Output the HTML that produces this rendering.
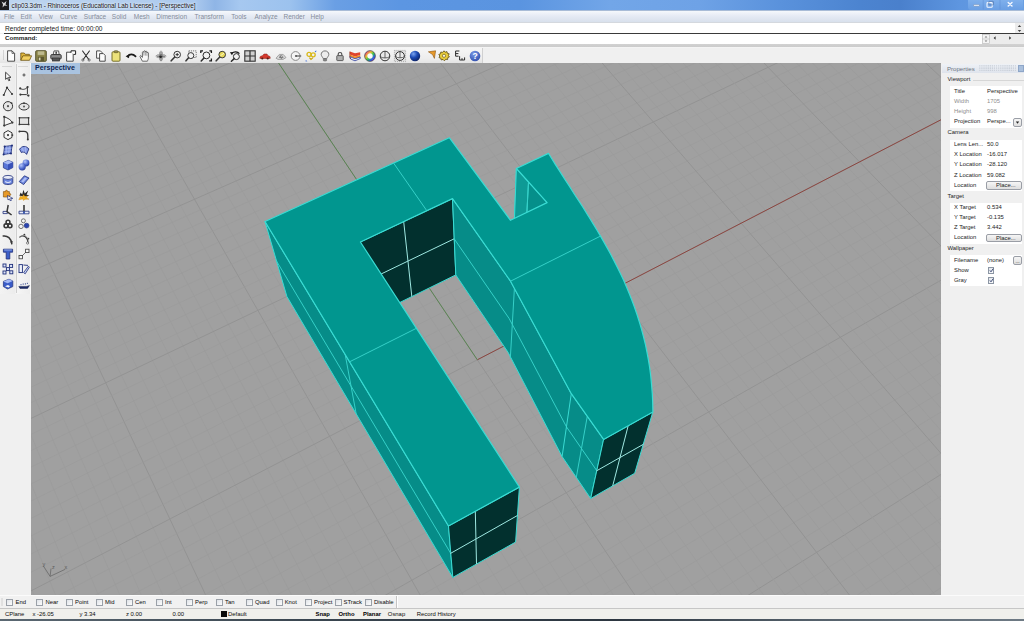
<!DOCTYPE html>
<html><head><meta charset="utf-8"><title>clip03.3dm - Rhinoceros</title>
<style>
html,body{margin:0;padding:0;}
body{width:1024px;height:621px;overflow:hidden;position:relative;background:#f0f0f0;font-family:"Liberation Sans",sans-serif;font-size:6px;color:#111;}
.abs{position:absolute;}
.t{position:absolute;white-space:nowrap;line-height:1;transform-origin:0 50%;}
#title{left:0;top:0;width:1024px;height:11px;background:linear-gradient(90deg,#bdd5ef 0px,#b6d0ee 100px,#abc9ee 195px,#8fb5e6 215px,#a6c8f0 240px,#9cc2ee 290px,#6a9fe4 335px,#5c96e2 400px,#5a94e0 520px,#72a6e8 610px,#6ea2e6 700px,#5a92dc 780px,#4c84d0 860px,#4a80cc 900px,#5e96e0 960px,#6a9fe2 1024px);}
#title:after{content:"";position:absolute;left:0;top:10px;width:1024px;height:1px;background:#a9bcd6;}
#title .txt{left:11.5px;top:2.6px;font-size:6.4px;color:#151515;letter-spacing:-0.05px;text-shadow:0 0 2px #fff,0 0 3px #e8f0fa;}
#ticon{left:0;top:0;width:9px;height:9.5px;background:#1c1c1c;}
#wbtn{left:968px;top:0;width:55px;height:9.5px;background:linear-gradient(180deg,#7fb0ec,#6a9fe4);border-radius:0 0 3px 3px;}
#menu{left:0;top:11px;width:1024px;height:11px;background:linear-gradient(180deg,#f5f8fc 0%,#e6ebf4 45%,#d8e0ec 100%);}
#menu .t{top:2.5px;font-size:6.5px;color:#848c9a;}
#hist{left:0;top:22px;width:1024px;height:11px;background:#fff;border-top:1px solid #d4d8de;box-sizing:border-box;}
#hist .t{left:5px;top:2.8px;font-size:6.6px;color:#1a1a1a;}
#hline{left:4px;top:33px;width:1020px;height:1px;background:#3a3a3a;}
#cmd{left:0;top:34px;width:1024px;height:10px;background:#fff;}
#cmd .t{left:5px;top:0.8px;font-size:6.2px;font-weight:bold;color:#1a1a1a;}
#gap{left:0;top:44px;width:1024px;height:4px;background:linear-gradient(180deg,#d2d2d2,#cbcbcb 75%,#f4f4f4 76%);}
#tb{left:0;top:48px;width:1024px;height:15px;background:linear-gradient(180deg,#f6f6f6,#ededed 70%,#e4e4e4);}
#tb svg{position:absolute;top:1.6px;width:12px;height:12px;overflow:visible;}
#side{left:0;top:63px;width:31px;height:532px;background:#f0f0f0;}
#side svg{position:absolute;width:12px;height:12px;overflow:visible;}
#view{left:31px;top:63px;width:910px;height:532px;overflow:hidden;background:#9f9f9f;}
#vlabel{left:31px;top:63px;width:49px;height:10.5px;background:#a9c3e0;}
#vlabel .t{left:4px;top:1.6px;font-size:7.1px;font-weight:bold;color:#0e2350;}
#props{left:941px;top:63px;width:83px;height:532px;background:#f0f0f0;}
#props .t{font-size:5.9px;color:#1c1c1c;}
#props .g{color:#8e8e8e;}
.row{position:absolute;left:9px;width:72px;height:10.2px;background:#fff;}
.btn{position:absolute;border:1px solid #9a9ea6;border-radius:2px;background:linear-gradient(180deg,#f6f6f6,#dedede);box-sizing:border-box;}
.cb{position:absolute;width:6.5px;height:6.5px;border:1px solid #8c96a4;background:linear-gradient(135deg,#dfe3e8,#fdfdfd);box-sizing:border-box;}
#osnap{left:0;top:595px;width:1024px;height:13px;background:#f1f1f1;border-top:1px solid #fbfbfb;box-sizing:border-box;}
#osnap .t{top:3.6px;font-size:5.9px;color:#0a0a0a;}
#osnap .cb{top:2.6px;width:7px;height:7px;border-color:#9aa0a8;}
#status{left:0;top:608px;width:1024px;height:11px;background:#f0f0ec;border-top:1px solid #c6c6c6;box-sizing:border-box;}
#status .t{top:2.6px;font-size:5.9px;color:#0a0a0a;}
#status b{font-weight:bold;color:#000;}
#bottom{left:0;top:619px;width:1024px;height:2px;background:linear-gradient(90deg,#5b6872,#3a4650 30%,#2c3640 60%,#56626c 80%,#6e7a84);}
</style></head><body>

<div id="title" class="abs"><div id="ticon" class="abs"><svg width="9" height="9.5" viewBox="0 0 9 9.5"><path d="M1.5 1.5 L4 3 L6.5 1 L5.5 4.5 L7.5 6 L4.5 5.5 L2.5 7.5 L3 4.5 Z" fill="#d8d8d8"/></svg></div>
<div class="t txt">clip03.3dm - Rhinoceros (Educational Lab License) - [Perspective]</div>
<div id="wbtn" class="abs"><svg width="55" height="9.5" viewBox="0 0 55 9.5"><rect x="5.5" y="4.6" width="6" height="1.6" rx=".5" fill="#f4f8ff" stroke="#4a6a9a" stroke-width=".4"/><rect x="19" y="2.6" width="5.2" height="4.6" rx=".8" fill="none" stroke="#f4f8ff" stroke-width="1.1"/><rect x="20.8" y="1.3" width="4.6" height="3.6" rx=".6" fill="none" stroke="#425e8c" stroke-width=".5"/><path d="M40.2 2.4 L44 6 M44 2.4 L40.2 6" stroke="#f4f8ff" stroke-width="1.4" stroke-linecap="round"/><path d="M15.2 0V9.5M32 0V9.5" stroke="#5a8ad0" stroke-width=".5"/></svg></div>
</div>
<div id="menu" class="abs">
<span class="t" style="left:4px">File</span><span class="t" style="left:20.5px">Edit</span><span class="t" style="left:38.8px">View</span><span class="t" style="left:60px">Curve</span><span class="t" style="left:83.8px">Surface</span><span class="t" style="left:111.8px">Solid</span><span class="t" style="left:133.8px">Mesh</span><span class="t" style="left:156.3px">Dimension</span><span class="t" style="left:194.5px">Transform</span><span class="t" style="left:231.3px">Tools</span><span class="t" style="left:254.5px">Analyze</span><span class="t" style="left:283.5px">Render</span><span class="t" style="left:310.5px">Help</span>
</div>
<div id="hist" class="abs"><span class="t">Render completed time: 00:00:00</span>
<div class="abs" style="left:1015px;top:0;width:9px;height:10px;background:#ececec;"><svg width="9" height="10" viewBox="0 0 9 10"><path d="M2.8 4 L4.5 2 L6.2 4Z M2.8 7 L4.5 9 L6.2 7Z" fill="#444"/></svg></div></div>
<div id="hline" class="abs"></div>
<div id="cmd" class="abs"><span class="t">Command:</span>
<div class="abs" style="left:982px;top:0;width:42px;height:10px;background:#ececec;"><svg width="42" height="10" viewBox="0 0 42 10"><rect x=".5" y=".5" width="7" height="9" fill="#f4f4f4" stroke="#b8b8b8" stroke-width=".6"/><path d="M.5 5H7.5" stroke="#b8b8b8" stroke-width=".6"/><path d="M2.6 3.6L4 2L5.4 3.6Z M2.6 6.4L4 8L5.4 6.4Z" fill="#777"/><path d="M13.6 2.2V5.8L11.6 4Z M27.2 2.2V5.8L29.2 4Z" fill="#333"/></svg></div></div>
<div id="gap" class="abs"></div>
<div id="tb" class="abs"><svg class="abs" style="left:2px;top:2px;width:3px;height:11px" viewBox="0 0 3 11"><path d="M1.5 .5V10.5" stroke="#b4b4b4" stroke-width="1" stroke-dasharray="1 1"/></svg>
<svg viewBox="0 0 12 12" style="left:5.0px"><path d="M2.6 .8H7L9.6 3.4V11.2H2.6Z" fill="#fdfdfd" stroke="#3a3a3a" stroke-width=".9"/><path d="M7 .8V3.4H9.6" fill="none" stroke="#3a3a3a" stroke-width=".7"/></svg>
<svg viewBox="0 0 12 12" style="left:20.0px"><path d="M.8 10.3V3H4.2L5.2 4.3H9.4V5.8" fill="#e3b93f" stroke="#6b5210" stroke-width=".8"/><path d="M.8 10.3L2.9 5.8H11.6L9.5 10.3Z" fill="#f3d162" stroke="#6b5210" stroke-width=".8"/></svg>
<svg viewBox="0 0 12 12" style="left:35.3px"><rect x=".7" y=".7" width="10.6" height="10.6" rx=".9" fill="#8b8549" stroke="#4c4822" stroke-width=".9"/><rect x="2.7" y="1.3" width="6.6" height="3.6" fill="#bdb98e"/><rect x="2.9" y="6.8" width="6.2" height="4.4" fill="#5c5830"/><rect x="3.8" y="7.6" width="1.7" height="2.8" fill="#d9d5b4"/></svg>
<svg viewBox="0 0 12 12" style="left:49.7px"><path d="M3.2 4.6L4 .9H8.6L9.2 4.6Z" fill="#f4f4f4" stroke="#333" stroke-width=".8"/><rect x=".8" y="4.6" width="10.4" height="4.4" rx="1" fill="#8c8c8c" stroke="#2e2e2e" stroke-width=".9"/><rect x="2.4" y="8" width="7.2" height="3" fill="#555" stroke="#2e2e2e" stroke-width=".7"/><rect x="5.4" y="1.6" width="1.6" height="2.2" fill="#444"/></svg>
<svg viewBox="0 0 12 12" style="left:65.3px"><path d="M1.6 2.2H6.4L8.2 4V11.2H1.6Z" fill="#fdfdfd" stroke="#3a3a3a" stroke-width=".9"/><path d="M6 2.6V.8H10.6V4.4H8.4" fill="#fdfdfd" stroke="#222" stroke-width="1"/></svg>
<svg viewBox="0 0 12 12" style="left:80.0px"><path d="M2.6 1L8.6 9.2M9.4 1L3.4 9.2" stroke="#2a2a2a" stroke-width="1.1" stroke-linecap="round"/><circle cx="2.9" cy="10" r="1.1" fill="none" stroke="#555" stroke-width=".8"/><circle cx="9.1" cy="10" r="1.1" fill="none" stroke="#555" stroke-width=".8"/></svg>
<svg viewBox="0 0 12 12" style="left:95.0px"><path d="M1.6 .9H5.4L7 2.5V8.2H1.6Z" fill="#fdfdfd" stroke="#3a3a3a" stroke-width=".9"/><path d="M4.6 3.6H8.4L10.2 5.4V11.2H4.6Z" fill="#fdfdfd" stroke="#3a3a3a" stroke-width=".9"/></svg>
<svg viewBox="0 0 12 12" style="left:109.7px"><rect x="2" y="1.8" width="8" height="9.4" rx="1" fill="#ece27a" stroke="#6a6220" stroke-width=".9"/><rect x="4.2" y=".7" width="3.6" height="2" rx=".6" fill="#9a9250" stroke="#5a5420" stroke-width=".6"/></svg>
<svg viewBox="0 0 12 12" style="left:124.7px"><path d="M2.6 6.4C4.6 3.6 8 3.6 10.6 6.4" fill="none" stroke="#1a1a1a" stroke-width="1.7" stroke-linecap="round"/><path d="M.6 6.2L4.4 4.2L4 8.2Z" fill="#1a1a1a"/></svg>
<svg viewBox="0 0 12 12" style="left:139.0px"><path d="M3.4 11.2L1 6.6C.6 5.6 1.8 5.2 2.4 6L3.4 7.4V2.4C3.4 1.4 4.9 1.4 4.9 2.4V1.5C4.9.5 6.4.5 6.4 1.5V2C6.4 1 7.9 1 7.9 2V3C7.9 2.1 9.4 2.1 9.4 3.1V7.4C9.4 9.2 8.8 10 8.4 11.2Z" fill="#f8f8f8" stroke="#4a4a4a" stroke-width=".8"/><path d="M4.9 2.4V5.6M6.4 2V5.6M7.9 3V5.8" stroke="#6a6a6a" stroke-width=".6"/></svg>
<svg viewBox="0 0 12 12" style="left:155.0px"><ellipse cx="6" cy="6" rx="1.7" ry="5.2" fill="none" stroke="#8e8e8e" stroke-width=".8"/><ellipse cx="6" cy="6.2" rx="5.2" ry="1.7" fill="none" stroke="#8e8e8e" stroke-width=".8"/><path d="M6 2V10.6M2 6.2H10" stroke="#3a3a3a" stroke-width=".8"/><circle cx="5.6" cy="6.8" r="1.3" fill="#222"/></svg>
<svg viewBox="0 0 12 12" style="left:169.7px"><circle cx="7.2" cy="4.6" r="3.3" fill="#f2f2f2" stroke="#383838" stroke-width="1"/><path d="M4.8 7L1.2 10.8" stroke="#383838" stroke-width="1.6" stroke-linecap="round"/><path d="M5.6 4.6H8.8M7.2 3V6.2" stroke="#2a2a2a" stroke-width=".9"/></svg>
<svg viewBox="0 0 12 12" style="left:184.7px"><rect x="3.8" y=".9" width="7.4" height="6.6" fill="none" stroke="#555" stroke-width=".8" stroke-dasharray="1.2 .9"/><circle cx="5.8" cy="5.6" r="3" fill="#f2f2f2" stroke="#383838" stroke-width="1"/><path d="M3.6 7.8L1 10.8" stroke="#383838" stroke-width="1.6" stroke-linecap="round"/></svg>
<svg viewBox="0 0 12 12" style="left:199.7px"><circle cx="6.4" cy="5.4" r="3.4" fill="#f2f2f2" stroke="#2b2b2b" stroke-width="1"/><path d="M4 8L1.2 11" stroke="#2b2b2b" stroke-width="1.5" stroke-linecap="round"/><path d="M.8 3V.8H3M9.4 .8H11.4V3M11.4 8.6V10.8H9.2" fill="none" stroke="#1a1a1a" stroke-width="1.3"/></svg>
<svg viewBox="0 0 12 12" style="left:215.0px"><circle cx="7.2" cy="4.6" r="3.3" fill="#e6d85a" stroke="#383838" stroke-width="1"/><path d="M4.8 7L1.2 10.8" stroke="#383838" stroke-width="1.6" stroke-linecap="round"/><path d="M5.4 5.8L9 3.2" stroke="#fff8c0" stroke-width="1"/></svg>
<svg viewBox="0 0 12 12" style="left:229.0px"><circle cx="7.4" cy="6.6" r="3" fill="#f2f2f2" stroke="#2b2b2b" stroke-width="1"/><path d="M5.2 8.6L2.4 11.2" stroke="#2b2b2b" stroke-width="1.5" stroke-linecap="round"/><path d="M2.8 3.4C5 1.2 8.6 1.4 10.4 3.6" fill="none" stroke="#1a1a1a" stroke-width="1.3"/><path d="M.8 2.2L4.4 2L3 5.2Z" fill="#1a1a1a"/></svg>
<svg viewBox="0 0 12 12" style="left:244.0px"><rect x=".8" y=".8" width="10.4" height="10.4" fill="#cfcfcf" stroke="#333" stroke-width="1.1"/><path d="M6 .8V11.2M.8 6H11.2" stroke="#333" stroke-width="1.2"/></svg>
<svg viewBox="0 0 12 12" style="left:259.0px"><path d="M.9 7.6C.9 6.2 2.2 6 3.4 5.8L5 4H8L9 5.8C10.4 6 11.2 6.4 11.2 7.6V8.4H.9Z" fill="#d43a2e" stroke="#8a1c14" stroke-width=".5"/><circle cx="3.3" cy="8.5" r="1.1" fill="#5a1a14"/><circle cx="8.7" cy="8.5" r="1.1" fill="#5a1a14"/></svg>
<svg viewBox="0 0 12 12" style="left:274.7px"><path d="M1 8.2L4.4 4.4H8.2L11 7.6L8 9.4H3Z" fill="#d8d8d8" stroke="#8a8a8a" stroke-width=".7"/><path d="M4 7.4H8.4M5 5.6L6.8 8.8" stroke="#6e6e6e" stroke-width=".8"/><circle cx="6.2" cy="6.8" r="1.3" fill="none" stroke="#777" stroke-width=".7"/></svg>
<svg viewBox="0 0 12 12" style="left:289.5px"><circle cx="5.6" cy="6" r="4.4" fill="#f4f4f4" stroke="#8a8a8a" stroke-width="1"/><path d="M6 6H11.2" stroke="#5a5a5a" stroke-width="1.2"/><circle cx="6" cy="6" r="1.1" fill="#5a5a5a"/></svg>
<svg viewBox="0 0 12 12" style="left:304.7px"><circle cx="4" cy="4.4" r="2" fill="none" stroke="#d8b818" stroke-width="1.3"/><circle cx="8.2" cy="4.8" r="2" fill="none" stroke="#d8b818" stroke-width="1.3"/><path d="M4.4 7.6L6 9.4L8 7.6" fill="none" stroke="#c8a410" stroke-width="1.1"/><path d="M9.6 1.2L11.4 .6L11 2.4ZM.8 10L.6 11.6L2.4 11.2Z" fill="#3a6ad8"/></svg>
<svg viewBox="0 0 12 12" style="left:319.0px"><path d="M6 .9C3.6.9 2.2 2.6 2.2 4.4C2.2 6 3.6 7 4.2 8.6H7.8C8.4 7 9.8 6 9.8 4.4C9.8 2.6 8.4.9 6 .9Z" fill="#ececec" stroke="#666" stroke-width=".9"/><rect x="4.4" y="8.8" width="3.2" height="2.2" rx=".6" fill="#8a8a8a" stroke="#555" stroke-width=".5"/></svg>
<svg viewBox="0 0 12 12" style="left:333.8px"><path d="M4.2 5.8V4C4.2 2 7.8 2 7.8 4V5.8" fill="none" stroke="#4a4a4a" stroke-width="1.1"/><rect x="2.8" y="5.6" width="6.4" height="5" rx=".6" fill="#b0b0b0" stroke="#505050" stroke-width=".9"/></svg>
<svg viewBox="0 0 12 12" style="left:349.0px"><path d="M.8 1.6L6 3.2L11.2 2.2V5L6 6.6L.8 4.6Z" fill="#e0442c"/><path d="M.8 4.6L6 6.6L11.2 5V7L6 8.8L.8 6.6Z" fill="#f08a28"/><path d="M.8 6.6L6 8.8L11.2 7V8.6L6 10.8L1.6 9Z" fill="#f4f4f4" stroke="#2a3a9a" stroke-width=".8"/><path d="M.8 1.6V6.8L1.6 9" fill="none" stroke="#7a2a1a" stroke-width=".6"/></svg>
<svg viewBox="0 0 12 12" style="left:363.8px"><defs><linearGradient id="cw1" x1="0" y1="0" x2="1" y2="1"><stop offset="0" stop-color="#e83a8a"/><stop offset=".3" stop-color="#f0c030"/><stop offset=".55" stop-color="#3ac84a"/><stop offset=".8" stop-color="#2a6ae0"/><stop offset="1" stop-color="#8a2ad0"/></linearGradient></defs><circle cx="6" cy="6" r="4" fill="none" stroke="url(#cw1)" stroke-width="2.6"/><circle cx="6" cy="6" r="5.4" fill="none" stroke="#222" stroke-width=".6"/><circle cx="6" cy="6" r="2.3" fill="#fafafa"/></svg>
<svg viewBox="0 0 12 12" style="left:378.8px"><circle cx="6" cy="6" r="4.8" fill="#e8e8e8" stroke="#333" stroke-width="1"/><path d="M1.2 6.6C3 8.4 9 8.4 10.8 6.6M6 1.2V8" fill="none" stroke="#444" stroke-width=".8"/></svg>
<svg viewBox="0 0 12 12" style="left:393.8px"><rect x=".4" y=".4" width="11.2" height="11.2" fill="#dcdcdc" stroke="#8a8a8a" stroke-width=".6" stroke-dasharray="1 1"/><circle cx="6" cy="6" r="4.4" fill="#ececec" stroke="#333" stroke-width="1"/><path d="M1.6 6.6C3.2 8.2 8.8 8.2 10.4 6.6M6 1.6V7.8" fill="none" stroke="#444" stroke-width=".8"/></svg>
<svg viewBox="0 0 12 12" style="left:408.5px"><defs><radialGradient id="bb1" cx=".35" cy=".3" r=".8"><stop offset="0" stop-color="#7aa4f0"/><stop offset=".45" stop-color="#1c4ab4"/><stop offset="1" stop-color="#0a1c5a"/></radialGradient></defs><circle cx="6" cy="6" r="5.2" fill="url(#bb1)"/></svg>
<svg viewBox="0 0 12 12" style="left:426.3px"><path d="M2.4 1.8L9.6 .8L8.4 8.4L6.6 4.6Z" fill="#e89a2a" stroke="#8a5210" stroke-width=".6"/></svg>
<svg viewBox="0 0 12 12" style="left:438.0px"><path d="M6 .8L7.2 2.2L9 1.6L9.4 3.4L11.2 3.8L10.4 5.4L11.4 7L9.8 7.6L9.6 9.6L7.8 9.2L6.4 10.8L5 9.4L3.2 10L2.8 8.2L1 7.6L1.8 6L.8 4.4L2.6 3.8L2.8 2L4.6 2.4Z" fill="#e8cc3a" stroke="#5a4a10" stroke-width=".8"/><circle cx="6" cy="5.8" r="1.6" fill="#f8f4d8" stroke="#5a4a10" stroke-width=".6"/></svg>
<svg viewBox="0 0 12 12" style="left:453.5px"><path d="M1.6 1H5.4M1.6 1V6.2H4.6M1.6 3.6H4.4M5.6 6.2V10H10.6V7.4M8 10V8.2" fill="none" stroke="#2a2a2a" stroke-width="1"/></svg>
<svg viewBox="0 0 12 12" style="left:468.5px"><defs><radialGradient id="hp1" cx=".4" cy=".3" r=".8"><stop offset="0" stop-color="#7a9ae8"/><stop offset="1" stop-color="#2a48a8"/></radialGradient></defs><circle cx="6" cy="6" r="5.3" fill="url(#hp1)"/><text x="6" y="9.2" text-anchor="middle" font-family="Liberation Sans,sans-serif" font-weight="bold" font-size="8.6" fill="#fff">?</text></svg>
<div class="abs" style="left:482px;top:0;width:1px;height:15px;background:#d0d0d0"></div><div class="abs" style="left:483px;top:0;width:541px;height:15px;background:#f0f0f0"></div></div>
<div id="side" class="abs"><div class="abs" style="left:0;top:0;width:31px;height:231px;background:linear-gradient(90deg,#f3f3f3,#ececec 48%,#f6f6f6 52%,#ececec)"></div>
<div class="abs" style="left:15.5px;top:1px;width:1px;height:229px;background:#cfcfcf"></div>
<div class="abs" style="left:29.5px;top:0;width:1.5px;height:231px;background:#fafafa"></div>
<svg class="abs" style="left:2px;top:2px;width:11px;height:3px" viewBox="0 0 11 3"><path d="M.5 1.5H10.5" stroke="#bcbcbc" stroke-width="1" stroke-dasharray="1 1"/></svg>
<svg class="abs" style="left:18px;top:2px;width:11px;height:3px" viewBox="0 0 11 3"><path d="M.5 1.5H10.5" stroke="#bcbcbc" stroke-width="1" stroke-dasharray="1 1"/></svg>
<svg viewBox="0 0 12 12" style="left:2px;top:6.9px"><path d="M3.6 2.2V9.4L5.4 7.8L6.8 10.8L7.9 10.3L6.5 7.4H9Z" fill="#fafafa" stroke="#383838" stroke-width=".9"/></svg>
<svg viewBox="0 0 12 12" style="left:18px;top:6.9px"><circle cx="6" cy="5" r="1.2" fill="#8a8a8a" stroke="#555" stroke-width=".5"/></svg>
<svg viewBox="0 0 12 12" style="left:2px;top:21.8px"><path d="M1.8 10L5 2.6L10 9" fill="none" stroke="#383838" stroke-width="1"/><circle cx="1.8" cy="10" r="1.1" fill="#383838"/><circle cx="5" cy="2.6" r="1.1" fill="#383838"/><circle cx="10" cy="9" r="1.1" fill="#383838"/></svg>
<svg viewBox="0 0 12 12" style="left:18px;top:21.8px"><path d="M2.2 3.4C5 5.4 8 4 9.6 2M2.4 9.6H8.4L10.4 10.6M9.4 2.4V9" fill="none" stroke="#383838" stroke-width="1"/><circle cx="2.2" cy="3.4" r="1.1" fill="#383838"/><circle cx="9.6" cy="2" r="1.1" fill="#383838"/><circle cx="2.4" cy="9.6" r="1.1" fill="#383838"/><circle cx="10.4" cy="10.6" r="1.1" fill="#383838"/></svg>
<svg viewBox="0 0 12 12" style="left:2px;top:36.6px"><circle cx="6" cy="6.2" r="4.6" fill="#e6e6e6" stroke="#383838" stroke-width="1"/><circle cx="6" cy="6.2" r="1.1" fill="#555"/><circle cx="9.6" cy="3.2" r="0.9" fill="#383838"/></svg>
<svg viewBox="0 0 12 12" style="left:18px;top:36.6px"><ellipse cx="6" cy="6.6" rx="5" ry="3.4" fill="#e6e6e6" stroke="#383838" stroke-width="1"/><circle cx="6" cy="6.6" r="1" fill="#555"/><circle cx="6" cy="3.2" r="0.9" fill="#383838"/></svg>
<svg viewBox="0 0 12 12" style="left:2px;top:51.5px"><path d="M2.2 1.8C6 3 9 5 10.4 7.6L2.2 10.6Z" fill="#f6f6f6" stroke="#383838" stroke-width="1"/><circle cx="2.2" cy="1.8" r="1.1" fill="#383838"/><circle cx="10.4" cy="7.6" r="1.1" fill="#383838"/><circle cx="2.2" cy="10.6" r="1.1" fill="#383838"/></svg>
<svg viewBox="0 0 12 12" style="left:18px;top:51.5px"><rect x="1.4" y="2.8" width="9.2" height="6.6" fill="#e2e2e2" stroke="#383838" stroke-width="1"/><circle cx="1.4" cy="2.8" r="0.9" fill="#383838"/><circle cx="10.6" cy="2.8" r="0.9" fill="#383838"/><circle cx="1.4" cy="9.4" r="0.9" fill="#383838"/><circle cx="10.6" cy="9.4" r="0.9" fill="#383838"/></svg>
<svg viewBox="0 0 12 12" style="left:2px;top:66.3px"><path d="M6 1.6L10 3.8V8.4L6 10.6L2 8.4V3.8Z" fill="#f6f6f6" stroke="#383838" stroke-width="1"/><circle cx="6" cy="6.1" r="1.1" fill="#383838"/><circle cx="10.4" cy="6.1" r="0.9" fill="#383838"/></svg>
<svg viewBox="0 0 12 12" style="left:18px;top:66.3px"><path d="M1.4 2.4H6C8.6 2.4 9.8 4 9.8 6.4V10.6" fill="none" stroke="#383838" stroke-width="1.3"/><circle cx="1.4" cy="2.4" r="1" fill="#383838"/><circle cx="9.8" cy="10.6" r="1" fill="#383838"/></svg>
<svg viewBox="0 0 12 12" style="left:2px;top:81.2px"><path d="M2.6 2.4L10 1.6L9 9.4L1.6 10.4Z" fill="#8296e4" stroke="#1f2f7a" stroke-width=".9"/><path d="M4.8 2.2L4 10M7.4 1.9L6.6 9.7M2.3 5L9.7 4.2M2 7.8L9.3 7" stroke="#b8c8f4" stroke-width=".5"/><circle cx="2.6" cy="2.4" r="1" fill="#1f2f7a"/><circle cx="10" cy="1.6" r="1" fill="#1f2f7a"/><circle cx="9" cy="9.4" r="1" fill="#1f2f7a"/><circle cx="1.6" cy="10.4" r="1" fill="#1f2f7a"/></svg>
<svg viewBox="0 0 12 12" style="left:18px;top:81.2px"><path d="M1.6 5.2C4 1.4 8.6 1.8 10.8 5L8.6 10.4C7.4 8 5 7.4 3.4 8.6Z" fill="#8a9ee8" stroke="#1f2f7a" stroke-width=".9"/><path d="M4 3.4L5.6 7.8M7.6 2.8L7.6 8.6" stroke="#c0ccf4" stroke-width=".5"/></svg>
<svg viewBox="0 0 12 12" style="left:2px;top:96.0px"><path d="M1.4 3.6L6.4 1.4L10.8 3.2V8.6L6 11L1.4 8.8Z" fill="#5a76d8" stroke="#1f2f7a" stroke-width=".7"/><path d="M1.4 3.6L6 5.4L10.8 3.2L6.4 1.4Z" fill="#aabcf4"/><path d="M6 5.4V11L10.8 8.6V3.2Z" fill="#3a52b8"/></svg>
<svg viewBox="0 0 12 12" style="left:18px;top:96.0px"><defs><radialGradient id="sg1" cx=".35" cy=".3" r=".8"><stop offset="0" stop-color="#b4c6fa"/><stop offset=".6" stop-color="#4a66cc"/><stop offset="1" stop-color="#22348a"/></radialGradient></defs><circle cx="8" cy="4" r="3.4" fill="url(#sg1)"/><circle cx="4.2" cy="7.8" r="3.6" fill="url(#sg1)"/></svg>
<svg viewBox="0 0 12 12" style="left:2px;top:110.9px"><path d="M1.2 3.4V8.6C1.2 11.2 10.8 11.2 10.8 8.6V3.4" fill="#6a84dc" stroke="#1f2f7a" stroke-width=".8"/><ellipse cx="6" cy="3.4" rx="4.8" ry="2" fill="#e8ecf8" stroke="#1f2f7a" stroke-width=".8"/><path d="M3.2 7.6C4.6 8.6 7.4 8.6 8.8 7.6" fill="none" stroke="#dfe6fa" stroke-width="1.2"/></svg>
<svg viewBox="0 0 12 12" style="left:18px;top:110.9px"><path d="M1.2 7.6L6.4 1.8L11 4L5.6 10.6Z" fill="#6a84dc" stroke="#1f2f7a" stroke-width=".8"/><path d="M3.2 7.4L7 3.2L9 4.2L5.2 8.6Z" fill="#aebef4"/></svg>
<svg viewBox="0 0 12 12" style="left:2px;top:125.7px"><path d="M1.4 2.6H3.6C3 .8 6 .8 5.4 2.6H7.4V4.6C9.2 4 9.2 7 7.4 6.4V8H1.4Z" fill="#e89a28" stroke="#7a4a0a" stroke-width=".6"/><path d="M5.4 6.4L10.8 9.4L8.6 9.6L9.4 11.4L8 11.6L7.4 9.8L6 11Z" fill="#fafafa" stroke="#1f2f7a" stroke-width=".7"/></svg>
<svg viewBox="0 0 12 12" style="left:18px;top:125.7px"><path d="M1.4 6.8L2.6 3.6L4.2 5.4L5.4 .8L6.8 4.6L10.2 1.4L8.6 5.8L11.2 6.2L8.8 7.6Z" fill="#2a2a2a"/><path d="M.8 10.8L2.4 7.2L4.2 8L5.6 5.6L7 7.8L9.4 6.8L8.6 9L11 10.2L7 10.2L5.8 11.4L4.4 10Z" fill="#f2b020" stroke="#c07808" stroke-width=".4"/></svg>
<svg viewBox="0 0 12 12" style="left:2px;top:140.6px"><path d="M1 7.4H5.4V9.6H1Z" fill="#e8ecf8" stroke="#1f2f7a" stroke-width=".8"/><path d="M6.2 1L5 7.6L9.6 11" fill="none" stroke="#383838" stroke-width="1.5"/></svg>
<svg viewBox="0 0 12 12" style="left:18px;top:140.6px"><path d="M1 7.2H11V9.8H1Z" fill="#e8ecf8" stroke="#1f2f7a" stroke-width=".8"/><path d="M6 1V9.6" stroke="#383838" stroke-width="1.6"/><path d="M5.2 7.2H6.8V9.8H5.2Z" fill="#3c5fc8"/></svg>
<svg viewBox="0 0 12 12" style="left:2px;top:155.4px"><circle cx="6" cy="4.2" r="1.9" fill="#fff" stroke="#383838" stroke-width="1.6"/><circle cx="4" cy="7.8" r="1.9" fill="#fff" stroke="#383838" stroke-width="1.6"/><circle cx="8" cy="7.8" r="1.9" fill="#fff" stroke="#383838" stroke-width="1.6"/></svg>
<svg viewBox="0 0 12 12" style="left:18px;top:155.4px"><circle cx="5.4" cy="2.8" r="2" fill="#f4f4f4" stroke="#555" stroke-width=".8"/><circle cx="3" cy="8.4" r="2.2" fill="#f4f4f4" stroke="#555" stroke-width=".8"/><circle cx="8.6" cy="7.6" r="2.4" fill="#2a44b0" stroke="#1f2f7a" stroke-width=".6"/></svg>
<svg viewBox="0 0 12 12" style="left:2px;top:170.2px"><path d="M1.2 3C5.6 2.4 9.2 5.4 9.8 10.8" fill="none" stroke="#383838" stroke-width="1.5" stroke-linecap="round"/><path d="M8 8.4L9.8 11.2L10.8 8" fill="#383838"/></svg>
<svg viewBox="0 0 12 12" style="left:18px;top:170.2px"><path d="M1.4 4.4C5 1 9.4 3.6 10 9.6" fill="none" stroke="#383838" stroke-width="1.1"/><path d="M1.4 4.4L6.4 1.4L10.6 5.6L10 9.6" fill="none" stroke="#9a9a9a" stroke-width=".5"/><circle cx="6.4" cy="1.6" r="0.9" fill="#383838"/><circle cx="10.4" cy="5.6" r="0.9" fill="#383838"/><circle cx="9.6" cy="10" r="1.1" fill="#fff" stroke="#333" stroke-width=".6"/></svg>
<svg viewBox="0 0 12 12" style="left:2px;top:185.1px"><path d="M1.4 1.2H10.6V4.2H7.8V11H4.2V4.2H1.4Z" fill="#3c5fc8" stroke="#1f2f7a" stroke-width=".8"/><path d="M2.2 2H9.8" stroke="#a8bcf4" stroke-width=".8"/></svg>
<svg viewBox="0 0 12 12" style="left:18px;top:185.1px"><path d="M3 9L9 3" stroke="#555" stroke-width=".8"/><rect x="1" y="7.4" width="3.4" height="3.4" fill="#f4f4f4" stroke="#383838" stroke-width=".8"/><rect x="7.6" y="1.2" width="3.4" height="3.4" fill="#f4f4f4" stroke="#383838" stroke-width=".8"/></svg>
<svg viewBox="0 0 12 12" style="left:2px;top:199.9px"><g fill="#dfe6fa" stroke="#1f2f7a" stroke-width=".9"><rect x="1" y="1" width="3" height="3"/><rect x="7.6" y="1.4" width="3" height="3"/><rect x="4.4" y="4.6" width="3" height="3"/><rect x="1" y="8" width="3" height="3"/><rect x="7.8" y="7.8" width="3" height="3"/></g></svg>
<svg viewBox="0 0 12 12" style="left:18px;top:199.9px"><rect x="1" y="1.6" width="3.4" height="8" fill="#eef2fc" stroke="#1f2f7a" stroke-width=".9"/><path d="M5.6 9.6L10.4 3.2L11.4 4.2L7.2 10.8Z" fill="#c8d4f8" stroke="#1f2f7a" stroke-width=".8"/><path d="M5.4 2L10 2.4" stroke="#1f2f7a" stroke-width=".9"/></svg>
<svg viewBox="0 0 12 12" style="left:2px;top:214.8px"><path d="M1.4 3.4L7 1.2L10.8 3V8.6L5.6 11L1.4 8.6Z" fill="#3a5cc8" stroke="#1f2f7a" stroke-width=".7"/><path d="M1.4 3.4L5.6 5.2L10.8 3L7 1.2Z" fill="#a4b8f4"/><path d="M3 8.2L6.6 9.6L8 8.2L6 7Z" fill="#f4f6fc"/></svg>
<svg viewBox="0 0 12 12" style="left:18px;top:214.8px"><path d="M.8 8.4L2 10.4H9.6L11.4 7.6L8.6 8.4Z" fill="#1c2c6a" stroke="#111a44" stroke-width=".5"/><path d="M3 7.2V6M5.2 6.8V5.4M7.4 6.6V5.2M9.4 6V4.8" stroke="#2a3c8a" stroke-width=".8"/></svg></div>
<div id="view" class="abs"><svg width="910" height="532" viewBox="0 0 910 532" style="display:block;background:#a0a0a0">
<g shape-rendering="auto"><line x1="22772.1" y1="-74844.8" x2="-1336.3" y2="-105.2" stroke="#939393" stroke-width="1" /><line x1="22772.1" y1="-74844.8" x2="3504.4" y2="986.4" stroke="#939393" stroke-width="1" /><line x1="25923.8" y1="-87248.9" x2="-1319.8" y2="-109.8" stroke="#9b9b9b" stroke-width="0.7" /><line x1="30434.2" y1="-98598.2" x2="3466.7" y2="963.7" stroke="#9b9b9b" stroke-width="0.7" /><line x1="30361.3" y1="-104713.4" x2="-1303.3" y2="-114.3" stroke="#9b9b9b" stroke-width="0.7" /><line x1="45455.5" y1="-145166.7" x2="3429.6" y2="941.3" stroke="#9b9b9b" stroke-width="0.7" /><line x1="37073.0" y1="-131128.5" x2="-1286.9" y2="-118.9" stroke="#9b9b9b" stroke-width="0.7" /><line x1="88236.3" y1="-277793.3" x2="3393.1" y2="919.4" stroke="#9b9b9b" stroke-width="0.7" /><line x1="48409.6" y1="-175745.6" x2="-1270.6" y2="-123.4" stroke="#9b9b9b" stroke-width="0.7" /><line x1="1171194.6" y1="-3635120.9" x2="3357.3" y2="897.8" stroke="#9b9b9b" stroke-width="0.7" /><line x1="71664.3" y1="-267268.5" x2="-1254.5" y2="-127.9" stroke="#9b9b9b" stroke-width="0.7" /><line x1="-105893.2" y1="324036.4" x2="3322.0" y2="876.6" stroke="#9b9b9b" stroke-width="0.7" /><line x1="146457.6" y1="-561630.0" x2="-1238.4" y2="-132.3" stroke="#9b9b9b" stroke-width="0.7" /><line x1="-51115.8" y1="154218.5" x2="3287.4" y2="855.8" stroke="#9b9b9b" stroke-width="0.7" /><line x1="-1311711.3" y1="5177242.5" x2="-1222.4" y2="-136.7" stroke="#9b9b9b" stroke-width="0.7" /><line x1="-33886.2" y1="100804.2" x2="3253.3" y2="835.2" stroke="#9b9b9b" stroke-width="0.7" /><line x1="-112818.6" y1="458795.5" x2="-1206.5" y2="-141.1" stroke="#9b9b9b" stroke-width="0.7" /><line x1="-25452.3" y1="74657.8" x2="3219.8" y2="815.1" stroke="#9b9b9b" stroke-width="0.7" /><line x1="-57045.7" y1="239292.0" x2="-1190.7" y2="-145.5" stroke="#9b9b9b" stroke-width="0.7" /><line x1="-20448.4" y1="59144.9" x2="3186.8" y2="795.2" stroke="#9b9b9b" stroke-width="0.7" /><line x1="-37283.5" y1="161514.3" x2="-1175.0" y2="-149.9" stroke="#939393" stroke-width="1" /><line x1="-17135.6" y1="48874.8" x2="3154.3" y2="775.7" stroke="#939393" stroke-width="1" /><line x1="-27167.1" y1="121699.3" x2="-1159.4" y2="-154.2" stroke="#9b9b9b" stroke-width="0.7" /><line x1="-14780.6" y1="41574.0" x2="3122.4" y2="756.5" stroke="#9b9b9b" stroke-width="0.7" /><line x1="-21019.7" y1="97505.5" x2="-1143.8" y2="-158.5" stroke="#9b9b9b" stroke-width="0.7" /><line x1="-13020.4" y1="36117.3" x2="3091.0" y2="737.5" stroke="#9b9b9b" stroke-width="0.7" /><line x1="-16888.7" y1="81247.2" x2="-1128.4" y2="-162.8" stroke="#9b9b9b" stroke-width="0.7" /><line x1="-11655.0" y1="31884.4" x2="3060.0" y2="718.9" stroke="#9b9b9b" stroke-width="0.7" /><line x1="-13921.8" y1="69570.3" x2="-1113.1" y2="-167.0" stroke="#9b9b9b" stroke-width="0.7" /><line x1="-10565.0" y1="28505.1" x2="3029.6" y2="700.6" stroke="#9b9b9b" stroke-width="0.7" /><line x1="-11687.6" y1="60777.4" x2="-1097.8" y2="-171.3" stroke="#9b9b9b" stroke-width="0.7" /><line x1="-9674.6" y1="25744.8" x2="2999.6" y2="682.6" stroke="#9b9b9b" stroke-width="0.7" /><line x1="-9944.6" y1="53917.5" x2="-1082.6" y2="-175.5" stroke="#9b9b9b" stroke-width="0.7" /><line x1="-8933.7" y1="23447.8" x2="2970.1" y2="664.8" stroke="#9b9b9b" stroke-width="0.7" /><line x1="-8546.9" y1="48416.4" x2="-1067.6" y2="-179.6" stroke="#9b9b9b" stroke-width="0.7" /><line x1="-8307.5" y1="21506.4" x2="2941.0" y2="647.3" stroke="#9b9b9b" stroke-width="0.7" /><line x1="-7401.0" y1="43906.7" x2="-1052.6" y2="-183.8" stroke="#9b9b9b" stroke-width="0.7" /><line x1="-7771.2" y1="19844.0" x2="2912.4" y2="630.1" stroke="#9b9b9b" stroke-width="0.7" /><line x1="-6444.6" y1="40142.5" x2="-1037.7" y2="-187.9" stroke="#9b9b9b" stroke-width="0.7" /><line x1="-7306.9" y1="18404.4" x2="2884.2" y2="613.1" stroke="#9b9b9b" stroke-width="0.7" /><line x1="-5634.2" y1="36953.1" x2="-1022.8" y2="-192.0" stroke="#939393" stroke-width="1" /><line x1="-6900.9" y1="17145.7" x2="2856.4" y2="596.4" stroke="#939393" stroke-width="1" /><line x1="-4938.8" y1="34216.2" x2="-1008.1" y2="-196.1" stroke="#9b9b9b" stroke-width="0.7" /><line x1="-6542.9" y1="16035.9" x2="2829.0" y2="579.9" stroke="#9b9b9b" stroke-width="0.7" /><line x1="-4335.5" y1="31841.8" x2="-993.4" y2="-200.2" stroke="#9b9b9b" stroke-width="0.7" /><line x1="-6224.8" y1="15049.9" x2="2802.0" y2="563.7" stroke="#9b9b9b" stroke-width="0.7" /><line x1="-3807.2" y1="29762.5" x2="-978.9" y2="-204.2" stroke="#9b9b9b" stroke-width="0.7" /><line x1="-5940.4" y1="14168.2" x2="2775.5" y2="547.7" stroke="#9b9b9b" stroke-width="0.7" /><line x1="-3340.6" y1="27926.4" x2="-964.4" y2="-208.2" stroke="#9b9b9b" stroke-width="0.7" /><line x1="-5684.5" y1="13374.9" x2="2749.3" y2="531.9" stroke="#9b9b9b" stroke-width="0.7" /><line x1="-2925.7" y1="26293.2" x2="-950.0" y2="-212.2" stroke="#9b9b9b" stroke-width="0.7" /><line x1="-5453.1" y1="12657.6" x2="2723.4" y2="516.4" stroke="#9b9b9b" stroke-width="0.7" /><line x1="-2554.1" y1="24831.0" x2="-935.6" y2="-216.2" stroke="#9b9b9b" stroke-width="0.7" /><line x1="-5242.9" y1="12005.7" x2="2698.0" y2="501.1" stroke="#9b9b9b" stroke-width="0.7" /><line x1="-2219.6" y1="23514.3" x2="-921.4" y2="-220.1" stroke="#9b9b9b" stroke-width="0.7" /><line x1="-5050.9" y1="11410.7" x2="2672.9" y2="486.0" stroke="#9b9b9b" stroke-width="0.7" /><line x1="-1916.8" y1="22322.5" x2="-907.2" y2="-224.1" stroke="#9b9b9b" stroke-width="0.7" /><line x1="-4875.1" y1="10865.4" x2="2648.2" y2="471.1" stroke="#9b9b9b" stroke-width="0.7" /><line x1="-1641.3" y1="21238.5" x2="-893.1" y2="-228.0" stroke="#9b9b9b" stroke-width="0.7" /><line x1="-4713.3" y1="10363.9" x2="2623.8" y2="456.4" stroke="#9b9b9b" stroke-width="0.7" /><line x1="-1389.8" y1="20248.4" x2="-879.1" y2="-231.9" stroke="#939393" stroke-width="1" /><line x1="-4564.0" y1="9901.1" x2="2599.7" y2="441.9" stroke="#939393" stroke-width="1" /><line x1="-1159.1" y1="19340.5" x2="-865.2" y2="-235.7" stroke="#9b9b9b" stroke-width="0.7" /><line x1="-4425.8" y1="9472.7" x2="2576.0" y2="427.7" stroke="#9b9b9b" stroke-width="0.7" /><line x1="-946.8" y1="18504.9" x2="-851.3" y2="-239.6" stroke="#9b9b9b" stroke-width="0.7" /><line x1="-4297.5" y1="9075.0" x2="2552.6" y2="413.6" stroke="#9b9b9b" stroke-width="0.7" /><line x1="-750.7" y1="17733.3" x2="-837.5" y2="-243.4" stroke="#9b9b9b" stroke-width="0.7" /><line x1="-4178.1" y1="8704.8" x2="2529.6" y2="399.7" stroke="#9b9b9b" stroke-width="0.7" /><line x1="-569.2" y1="17018.7" x2="-823.8" y2="-247.2" stroke="#9b9b9b" stroke-width="0.7" /><line x1="-4066.7" y1="8359.3" x2="2506.8" y2="386.0" stroke="#9b9b9b" stroke-width="0.7" /><line x1="-400.5" y1="16355.0" x2="-810.2" y2="-251.0" stroke="#9b9b9b" stroke-width="0.7" /><line x1="-3962.4" y1="8036.2" x2="2484.3" y2="372.5" stroke="#9b9b9b" stroke-width="0.7" /><line x1="-243.5" y1="15736.9" x2="-796.6" y2="-254.7" stroke="#9b9b9b" stroke-width="0.7" /><line x1="-3864.8" y1="7733.3" x2="2462.2" y2="359.1" stroke="#9b9b9b" stroke-width="0.7" /><line x1="-96.8" y1="15159.8" x2="-783.2" y2="-258.4" stroke="#9b9b9b" stroke-width="0.7" /><line x1="-3773.0" y1="7448.9" x2="2440.3" y2="346.0" stroke="#9b9b9b" stroke-width="0.7" /><line x1="40.4" y1="14619.9" x2="-769.7" y2="-262.2" stroke="#9b9b9b" stroke-width="0.7" /><line x1="-3686.6" y1="7181.2" x2="2418.7" y2="333.0" stroke="#9b9b9b" stroke-width="0.7" /><line x1="169.0" y1="14113.6" x2="-756.4" y2="-265.9" stroke="#9b9b9b" stroke-width="0.7" /><line x1="-3605.2" y1="6928.8" x2="2397.4" y2="320.2" stroke="#9b9b9b" stroke-width="0.7" /><line x1="289.9" y1="13637.9" x2="-743.1" y2="-269.5" stroke="#939393" stroke-width="1" /><line x1="-3528.4" y1="6690.5" x2="2376.4" y2="307.5" stroke="#939393" stroke-width="1" /><line x1="403.6" y1="13190.1" x2="-729.9" y2="-273.2" stroke="#9b9b9b" stroke-width="0.7" /><line x1="-3455.7" y1="6465.1" x2="2355.7" y2="295.0" stroke="#9b9b9b" stroke-width="0.7" /><line x1="510.9" y1="12767.9" x2="-716.8" y2="-276.8" stroke="#9b9b9b" stroke-width="0.7" /><line x1="-3386.8" y1="6251.6" x2="2335.2" y2="282.7" stroke="#9b9b9b" stroke-width="0.7" /><line x1="612.3" y1="12369.0" x2="-703.8" y2="-280.4" stroke="#9b9b9b" stroke-width="0.7" /><line x1="-3321.5" y1="6049.0" x2="2314.9" y2="270.5" stroke="#9b9b9b" stroke-width="0.7" /><line x1="708.2" y1="11991.6" x2="-690.8" y2="-284.0" stroke="#9b9b9b" stroke-width="0.7" /><line x1="-3259.4" y1="5856.7" x2="2295.0" y2="258.5" stroke="#9b9b9b" stroke-width="0.7" /><line x1="799.0" y1="11634.0" x2="-677.9" y2="-287.6" stroke="#9b9b9b" stroke-width="0.7" /><line x1="-3200.4" y1="5673.7" x2="2275.3" y2="246.6" stroke="#9b9b9b" stroke-width="0.7" /><line x1="885.2" y1="11294.8" x2="-665.0" y2="-291.2" stroke="#9b9b9b" stroke-width="0.7" /><line x1="-3144.2" y1="5499.4" x2="2255.8" y2="234.9" stroke="#9b9b9b" stroke-width="0.7" /><line x1="967.1" y1="10972.4" x2="-652.2" y2="-294.7" stroke="#9b9b9b" stroke-width="0.7" /><line x1="-3090.6" y1="5333.3" x2="2236.6" y2="223.4" stroke="#9b9b9b" stroke-width="0.7" /><line x1="1045.1" y1="10665.7" x2="-639.5" y2="-298.2" stroke="#9b9b9b" stroke-width="0.7" /><line x1="-3039.4" y1="5174.7" x2="2217.6" y2="211.9" stroke="#9b9b9b" stroke-width="0.7" /><line x1="1119.3" y1="10373.7" x2="-626.9" y2="-301.8" stroke="#9b9b9b" stroke-width="0.7" /><line x1="-2990.6" y1="5023.2" x2="2198.8" y2="200.6" stroke="#9b9b9b" stroke-width="0.7" /><line x1="1190.0" y1="10095.1" x2="-614.3" y2="-305.2" stroke="#939393" stroke-width="1" /><line x1="-2943.8" y1="4878.3" x2="2180.3" y2="189.5" stroke="#939393" stroke-width="1" /><line x1="1257.6" y1="9829.2" x2="-601.8" y2="-308.7" stroke="#9b9b9b" stroke-width="0.7" /><line x1="-2899.1" y1="4739.6" x2="2162.0" y2="178.5" stroke="#9b9b9b" stroke-width="0.7" /><line x1="1322.2" y1="9575.1" x2="-589.3" y2="-312.2" stroke="#9b9b9b" stroke-width="0.7" /><line x1="-2856.2" y1="4606.6" x2="2143.9" y2="167.6" stroke="#9b9b9b" stroke-width="0.7" /><line x1="1383.9" y1="9332.0" x2="-576.9" y2="-315.6" stroke="#9b9b9b" stroke-width="0.7" /><line x1="-2815.1" y1="4479.1" x2="2126.0" y2="156.8" stroke="#9b9b9b" stroke-width="0.7" /><line x1="1443.1" y1="9099.2" x2="-564.6" y2="-319.0" stroke="#9b9b9b" stroke-width="0.7" /><line x1="-2775.6" y1="4356.7" x2="2108.3" y2="146.2" stroke="#9b9b9b" stroke-width="0.7" /><line x1="1499.8" y1="8876.2" x2="-552.4" y2="-322.4" stroke="#9b9b9b" stroke-width="0.7" /><line x1="-2737.6" y1="4239.1" x2="2090.9" y2="135.7" stroke="#9b9b9b" stroke-width="0.7" /><line x1="1554.1" y1="8662.2" x2="-540.2" y2="-325.8" stroke="#9b9b9b" stroke-width="0.7" /><line x1="-2701.2" y1="4126.1" x2="2073.6" y2="125.3" stroke="#9b9b9b" stroke-width="0.7" /><line x1="1606.3" y1="8456.7" x2="-528.0" y2="-329.1" stroke="#9b9b9b" stroke-width="0.7" /><line x1="-2666.1" y1="4017.3" x2="2056.6" y2="115.1" stroke="#9b9b9b" stroke-width="0.7" /><line x1="1656.5" y1="8259.3" x2="-516.0" y2="-332.5" stroke="#9b9b9b" stroke-width="0.7" /><line x1="-2632.3" y1="3912.5" x2="2039.8" y2="104.9" stroke="#9b9b9b" stroke-width="0.7" /><line x1="1704.7" y1="8069.4" x2="-504.0" y2="-335.8" stroke="#9b9b9b" stroke-width="0.7" /><line x1="-2599.7" y1="3811.6" x2="2023.1" y2="94.9" stroke="#9b9b9b" stroke-width="0.7" /><line x1="1751.2" y1="7886.8" x2="-492.0" y2="-339.1" stroke="#939393" stroke-width="1" /><line x1="-2568.3" y1="3714.3" x2="2006.6" y2="85.0" stroke="#939393" stroke-width="1" /><line x1="1795.9" y1="7710.8" x2="-480.1" y2="-342.4" stroke="#9b9b9b" stroke-width="0.7" /><line x1="-2538.0" y1="3620.4" x2="1990.4" y2="75.2" stroke="#9b9b9b" stroke-width="0.7" /><line x1="1838.9" y1="7541.3" x2="-468.3" y2="-345.7" stroke="#9b9b9b" stroke-width="0.7" /><line x1="-2508.8" y1="3529.7" x2="1974.3" y2="65.5" stroke="#9b9b9b" stroke-width="0.7" /><line x1="1880.5" y1="7377.8" x2="-456.6" y2="-348.9" stroke="#9b9b9b" stroke-width="0.7" /><line x1="-2480.6" y1="3442.1" x2="1958.4" y2="55.9" stroke="#9b9b9b" stroke-width="0.7" /><line x1="1920.6" y1="7220.0" x2="-444.8" y2="-352.2" stroke="#9b9b9b" stroke-width="0.7" /><line x1="-2453.2" y1="3357.4" x2="1942.7" y2="46.5" stroke="#9b9b9b" stroke-width="0.7" /><line x1="1959.3" y1="7067.7" x2="-433.2" y2="-355.4" stroke="#9b9b9b" stroke-width="0.7" /><line x1="-2426.8" y1="3275.6" x2="1927.1" y2="37.1" stroke="#9b9b9b" stroke-width="0.7" /><line x1="1996.7" y1="6920.5" x2="-421.6" y2="-358.6" stroke="#9b9b9b" stroke-width="0.7" /><line x1="-2401.3" y1="3196.3" x2="1911.7" y2="27.9" stroke="#9b9b9b" stroke-width="0.7" /><line x1="2032.8" y1="6778.2" x2="-410.1" y2="-361.8" stroke="#9b9b9b" stroke-width="0.7" /><line x1="-2376.5" y1="3119.6" x2="1896.5" y2="18.7" stroke="#9b9b9b" stroke-width="0.7" /><line x1="2067.8" y1="6640.6" x2="-398.6" y2="-365.0" stroke="#9b9b9b" stroke-width="0.7" /><line x1="-2352.6" y1="3045.3" x2="1881.5" y2="9.7" stroke="#9b9b9b" stroke-width="0.7" /><line x1="2101.6" y1="6507.4" x2="-387.2" y2="-368.2" stroke="#9b9b9b" stroke-width="0.7" /><line x1="-2329.3" y1="2973.3" x2="1866.6" y2="0.7" stroke="#9b9b9b" stroke-width="0.7" /><line x1="2134.4" y1="6378.4" x2="-375.9" y2="-371.3" stroke="#939393" stroke-width="1" /><line x1="-2306.8" y1="2903.4" x2="1851.9" y2="-8.2" stroke="#939393" stroke-width="1" /><line x1="2166.2" y1="6253.4" x2="-364.6" y2="-374.4" stroke="#9b9b9b" stroke-width="0.7" /><line x1="-2284.9" y1="2835.7" x2="1837.3" y2="-16.9" stroke="#9b9b9b" stroke-width="0.7" /><line x1="2196.9" y1="6132.3" x2="-353.3" y2="-377.5" stroke="#9b9b9b" stroke-width="0.7" /><line x1="-2263.7" y1="2769.9" x2="1822.9" y2="-25.6" stroke="#9b9b9b" stroke-width="0.7" /><line x1="2226.8" y1="6014.9" x2="-342.1" y2="-380.6" stroke="#9b9b9b" stroke-width="0.7" /><line x1="-2243.1" y1="2706.0" x2="1808.7" y2="-34.2" stroke="#9b9b9b" stroke-width="0.7" /><line x1="2255.7" y1="5900.9" x2="-331.0" y2="-383.7" stroke="#9b9b9b" stroke-width="0.7" /><line x1="-2223.1" y1="2644.0" x2="1794.6" y2="-42.6" stroke="#9b9b9b" stroke-width="0.7" /><line x1="2283.8" y1="5790.3" x2="-319.9" y2="-386.8" stroke="#9b9b9b" stroke-width="0.7" /><line x1="-2203.7" y1="2583.7" x2="1780.6" y2="-51.0" stroke="#9b9b9b" stroke-width="0.7" /><line x1="2311.1" y1="5682.9" x2="-308.9" y2="-389.9" stroke="#9b9b9b" stroke-width="0.7" /><line x1="-2184.8" y1="2525.1" x2="1766.8" y2="-59.3" stroke="#9b9b9b" stroke-width="0.7" /><line x1="2337.6" y1="5578.6" x2="-297.9" y2="-392.9" stroke="#9b9b9b" stroke-width="0.7" /><line x1="-2166.4" y1="2468.1" x2="1753.2" y2="-67.6" stroke="#9b9b9b" stroke-width="0.7" /><line x1="2363.4" y1="5477.2" x2="-287.0" y2="-395.9" stroke="#9b9b9b" stroke-width="0.7" /><line x1="-2148.5" y1="2412.7" x2="1739.7" y2="-75.7" stroke="#9b9b9b" stroke-width="0.7" /><line x1="2388.4" y1="5378.6" x2="-276.1" y2="-398.9" stroke="#9b9b9b" stroke-width="0.7" /><line x1="-2131.1" y1="2358.7" x2="1726.3" y2="-83.7" stroke="#9b9b9b" stroke-width="0.7" /><line x1="2412.8" y1="5282.7" x2="-265.3" y2="-401.9" stroke="#939393" stroke-width="1" /><line x1="-2114.1" y1="2306.2" x2="1713.0" y2="-91.7" stroke="#939393" stroke-width="1" /><line x1="2436.5" y1="5189.4" x2="-254.6" y2="-404.9" stroke="#9b9b9b" stroke-width="0.7" /><line x1="-2097.6" y1="2255.0" x2="1699.9" y2="-99.6" stroke="#9b9b9b" stroke-width="0.7" /><line x1="2459.6" y1="5098.6" x2="-243.9" y2="-407.9" stroke="#9b9b9b" stroke-width="0.7" /><line x1="-2081.5" y1="2205.1" x2="1687.0" y2="-107.4" stroke="#9b9b9b" stroke-width="0.7" /><line x1="2482.1" y1="5010.2" x2="-233.2" y2="-410.8" stroke="#9b9b9b" stroke-width="0.7" /><line x1="-2065.9" y1="2156.5" x2="1674.1" y2="-115.1" stroke="#9b9b9b" stroke-width="0.7" /><line x1="2503.9" y1="4924.0" x2="-222.6" y2="-413.8" stroke="#9b9b9b" stroke-width="0.7" /><line x1="-2050.6" y1="2109.1" x2="1661.4" y2="-122.8" stroke="#9b9b9b" stroke-width="0.7" /><line x1="2525.3" y1="4840.1" x2="-212.1" y2="-416.7" stroke="#9b9b9b" stroke-width="0.7" /><line x1="-2035.7" y1="2062.9" x2="1648.9" y2="-130.3" stroke="#9b9b9b" stroke-width="0.7" /><line x1="2546.1" y1="4758.3" x2="-201.6" y2="-419.6" stroke="#9b9b9b" stroke-width="0.7" /><line x1="-2021.1" y1="2017.8" x2="1636.4" y2="-137.8" stroke="#9b9b9b" stroke-width="0.7" /><line x1="2566.3" y1="4678.5" x2="-191.1" y2="-422.5" stroke="#9b9b9b" stroke-width="0.7" /><line x1="-2006.9" y1="1973.8" x2="1624.1" y2="-145.2" stroke="#9b9b9b" stroke-width="0.7" /><line x1="2586.1" y1="4600.7" x2="-180.7" y2="-425.4" stroke="#9b9b9b" stroke-width="0.7" /><line x1="-1993.1" y1="1930.9" x2="1611.9" y2="-152.6" stroke="#9b9b9b" stroke-width="0.7" /><line x1="2605.4" y1="4524.8" x2="-170.4" y2="-428.2" stroke="#9b9b9b" stroke-width="0.7" /><line x1="-1979.5" y1="1888.9" x2="1599.8" y2="-159.9" stroke="#9b9b9b" stroke-width="0.7" /><line x1="2624.2" y1="4450.8" x2="-160.1" y2="-431.1" stroke="#939393" stroke-width="1" /><line x1="-1966.3" y1="1848.0" x2="1587.8" y2="-167.1" stroke="#939393" stroke-width="1" /><line x1="2642.6" y1="4378.4" x2="-149.8" y2="-433.9" stroke="#9b9b9b" stroke-width="0.7" /><line x1="-1953.4" y1="1807.9" x2="1576.0" y2="-174.2" stroke="#9b9b9b" stroke-width="0.7" /><line x1="2660.5" y1="4307.8" x2="-139.6" y2="-436.8" stroke="#9b9b9b" stroke-width="0.7" /><line x1="-1940.8" y1="1768.8" x2="1564.2" y2="-181.3" stroke="#9b9b9b" stroke-width="0.7" /><line x1="2678.0" y1="4238.8" x2="-129.4" y2="-439.6" stroke="#9b9b9b" stroke-width="0.7" /><line x1="-1928.5" y1="1730.6" x2="1552.6" y2="-188.3" stroke="#9b9b9b" stroke-width="0.7" /><line x1="2695.2" y1="4171.5" x2="-119.3" y2="-442.4" stroke="#9b9b9b" stroke-width="0.7" /><line x1="-1916.4" y1="1693.2" x2="1541.1" y2="-195.2" stroke="#9b9b9b" stroke-width="0.7" /><line x1="2711.9" y1="4105.6" x2="-109.3" y2="-445.2" stroke="#9b9b9b" stroke-width="0.7" /><line x1="-1904.6" y1="1656.6" x2="1529.7" y2="-202.0" stroke="#9b9b9b" stroke-width="0.7" /><line x1="2728.3" y1="4041.2" x2="-99.3" y2="-447.9" stroke="#9b9b9b" stroke-width="0.7" /><line x1="-1893.1" y1="1620.9" x2="1518.4" y2="-208.8" stroke="#9b9b9b" stroke-width="0.7" /><line x1="2744.3" y1="3978.3" x2="-89.3" y2="-450.7" stroke="#9b9b9b" stroke-width="0.7" /><line x1="-1881.8" y1="1585.9" x2="1507.2" y2="-215.6" stroke="#9b9b9b" stroke-width="0.7" /><line x1="2759.9" y1="3916.7" x2="-79.4" y2="-453.5" stroke="#9b9b9b" stroke-width="0.7" /><line x1="-1870.8" y1="1551.6" x2="1496.1" y2="-222.2" stroke="#9b9b9b" stroke-width="0.7" /><line x1="2775.2" y1="3856.5" x2="-69.5" y2="-456.2" stroke="#9b9b9b" stroke-width="0.7" /><line x1="-1859.9" y1="1518.1" x2="1485.1" y2="-228.9" stroke="#9b9b9b" stroke-width="0.7" /><line x1="2790.2" y1="3797.5" x2="-59.7" y2="-458.9" stroke="#939393" stroke-width="1" /><line x1="-1849.3" y1="1485.3" x2="1474.3" y2="-235.4" stroke="#939393" stroke-width="1" /><line x1="2804.8" y1="3739.8" x2="-49.9" y2="-461.6" stroke="#9b9b9b" stroke-width="0.7" /><line x1="-1839.0" y1="1453.1" x2="1463.5" y2="-241.9" stroke="#9b9b9b" stroke-width="0.7" /><line x1="2819.2" y1="3683.4" x2="-40.1" y2="-464.3" stroke="#9b9b9b" stroke-width="0.7" /><line x1="-1828.8" y1="1421.6" x2="1452.8" y2="-248.3" stroke="#9b9b9b" stroke-width="0.7" /><line x1="2833.2" y1="3628.1" x2="-30.5" y2="-467.0" stroke="#9b9b9b" stroke-width="0.7" /><line x1="-1818.9" y1="1390.8" x2="1442.2" y2="-254.7" stroke="#9b9b9b" stroke-width="0.7" /><line x1="2847.0" y1="3573.9" x2="-20.8" y2="-469.7" stroke="#9b9b9b" stroke-width="0.7" /><line x1="-1809.1" y1="1360.5" x2="1431.8" y2="-261.0" stroke="#9b9b9b" stroke-width="0.7" /><line x1="2860.5" y1="3520.8" x2="-11.2" y2="-472.3" stroke="#9b9b9b" stroke-width="0.7" /><line x1="-1799.5" y1="1330.9" x2="1421.4" y2="-267.2" stroke="#9b9b9b" stroke-width="0.7" /><line x1="2873.7" y1="3468.9" x2="-1.6" y2="-475.0" stroke="#9b9b9b" stroke-width="0.7" /><line x1="-1790.2" y1="1301.8" x2="1411.1" y2="-273.4" stroke="#9b9b9b" stroke-width="0.7" /><line x1="2886.6" y1="3417.9" x2="7.9" y2="-477.6" stroke="#9b9b9b" stroke-width="0.7" /><line x1="-1781.0" y1="1273.3" x2="1400.9" y2="-279.6" stroke="#9b9b9b" stroke-width="0.7" /><line x1="2899.3" y1="3368.0" x2="17.3" y2="-480.3" stroke="#9b9b9b" stroke-width="0.7" /><line x1="-1772.0" y1="1245.4" x2="1390.8" y2="-285.6" stroke="#9b9b9b" stroke-width="0.7" /><line x1="2911.8" y1="3319.0" x2="26.8" y2="-482.9" stroke="#9b9b9b" stroke-width="0.7" /><line x1="-1763.1" y1="1218.0" x2="1380.8" y2="-291.7" stroke="#9b9b9b" stroke-width="0.7" /><line x1="2924.0" y1="3271.0" x2="36.2" y2="-485.5" stroke="#939393" stroke-width="1" /><line x1="-1754.5" y1="1191.1" x2="1370.9" y2="-297.6" stroke="#939393" stroke-width="1" /><line x1="2935.9" y1="3223.9" x2="45.5" y2="-488.1" stroke="#9b9b9b" stroke-width="0.7" /><line x1="-1745.9" y1="1164.7" x2="1361.0" y2="-303.6" stroke="#9b9b9b" stroke-width="0.7" /><line x1="2947.7" y1="3177.7" x2="54.8" y2="-490.6" stroke="#9b9b9b" stroke-width="0.7" /><line x1="-1737.6" y1="1138.8" x2="1351.3" y2="-309.4" stroke="#9b9b9b" stroke-width="0.7" /><line x1="2959.2" y1="3132.4" x2="64.1" y2="-493.2" stroke="#9b9b9b" stroke-width="0.7" /><line x1="-1729.4" y1="1113.4" x2="1341.6" y2="-315.2" stroke="#9b9b9b" stroke-width="0.7" /><line x1="2970.5" y1="3087.9" x2="73.3" y2="-495.8" stroke="#9b9b9b" stroke-width="0.7" /><line x1="-1721.3" y1="1088.4" x2="1332.0" y2="-321.0" stroke="#9b9b9b" stroke-width="0.7" /><line x1="2981.6" y1="3044.3" x2="82.5" y2="-498.3" stroke="#9b9b9b" stroke-width="0.7" /><line x1="-1713.4" y1="1063.9" x2="1322.5" y2="-326.7" stroke="#9b9b9b" stroke-width="0.7" /><line x1="2992.5" y1="3001.4" x2="91.6" y2="-500.8" stroke="#9b9b9b" stroke-width="0.7" /><line x1="-1705.7" y1="1039.8" x2="1313.1" y2="-332.4" stroke="#9b9b9b" stroke-width="0.7" /><line x1="3003.1" y1="2959.4" x2="100.7" y2="-503.3" stroke="#9b9b9b" stroke-width="0.7" /><line x1="-1698.0" y1="1016.2" x2="1303.8" y2="-338.0" stroke="#9b9b9b" stroke-width="0.7" /><line x1="3013.6" y1="2918.0" x2="109.8" y2="-505.9" stroke="#9b9b9b" stroke-width="0.7" /><line x1="-1690.5" y1="992.9" x2="1294.5" y2="-343.6" stroke="#9b9b9b" stroke-width="0.7" /><line x1="3024.0" y1="2877.5" x2="118.8" y2="-508.4" stroke="#9b9b9b" stroke-width="0.7" /><line x1="-1683.2" y1="970.1" x2="1285.4" y2="-349.1" stroke="#9b9b9b" stroke-width="0.7" /><line x1="3034.1" y1="2837.6" x2="127.8" y2="-510.8" stroke="#939393" stroke-width="1" /><line x1="-1675.9" y1="947.7" x2="1276.3" y2="-354.6" stroke="#939393" stroke-width="1" /><line x1="3044.0" y1="2798.4" x2="136.7" y2="-513.3" stroke="#9b9b9b" stroke-width="0.7" /><line x1="-1668.8" y1="925.6" x2="1267.3" y2="-360.0" stroke="#9b9b9b" stroke-width="0.7" /><line x1="3053.8" y1="2760.0" x2="145.6" y2="-515.8" stroke="#9b9b9b" stroke-width="0.7" /><line x1="-1661.8" y1="903.9" x2="1258.3" y2="-365.4" stroke="#9b9b9b" stroke-width="0.7" /><line x1="3063.4" y1="2722.1" x2="154.5" y2="-518.2" stroke="#9b9b9b" stroke-width="0.7" /><line x1="-1654.9" y1="882.6" x2="1249.5" y2="-370.7" stroke="#9b9b9b" stroke-width="0.7" /><line x1="3072.9" y1="2685.0" x2="163.3" y2="-520.7" stroke="#9b9b9b" stroke-width="0.7" /><line x1="-1648.2" y1="861.7" x2="1240.7" y2="-376.0" stroke="#9b9b9b" stroke-width="0.7" /><line x1="3082.1" y1="2648.4" x2="172.1" y2="-523.1" stroke="#9b9b9b" stroke-width="0.7" /><line x1="-1641.5" y1="841.0" x2="1232.0" y2="-381.2" stroke="#9b9b9b" stroke-width="0.7" /><line x1="3091.3" y1="2612.5" x2="180.8" y2="-525.5" stroke="#9b9b9b" stroke-width="0.7" /><line x1="-1635.0" y1="820.8" x2="1223.3" y2="-386.4" stroke="#9b9b9b" stroke-width="0.7" /><line x1="3100.3" y1="2577.2" x2="189.5" y2="-527.9" stroke="#9b9b9b" stroke-width="0.7" /><line x1="-1628.6" y1="800.8" x2="1214.7" y2="-391.6" stroke="#9b9b9b" stroke-width="0.7" /><line x1="3109.1" y1="2542.4" x2="198.2" y2="-530.4" stroke="#9b9b9b" stroke-width="0.7" /><line x1="-1622.2" y1="781.2" x2="1206.2" y2="-396.7" stroke="#9b9b9b" stroke-width="0.7" /><line x1="3117.8" y1="2508.2" x2="206.8" y2="-532.7" stroke="#9b9b9b" stroke-width="0.7" /><line x1="-1616.0" y1="761.9" x2="1197.8" y2="-401.8" stroke="#9b9b9b" stroke-width="0.7" /><line x1="3126.3" y1="2474.6" x2="215.4" y2="-535.1" stroke="#939393" stroke-width="1" /><line x1="-1609.9" y1="742.9" x2="1189.4" y2="-406.8" stroke="#939393" stroke-width="1" /><line x1="3134.7" y1="2441.5" x2="223.9" y2="-537.5" stroke="#9b9b9b" stroke-width="0.7" /><line x1="-1603.8" y1="724.2" x2="1181.2" y2="-411.8" stroke="#9b9b9b" stroke-width="0.7" /><line x1="3143.0" y1="2409.0" x2="232.5" y2="-539.9" stroke="#9b9b9b" stroke-width="0.7" /><line x1="-1597.9" y1="705.8" x2="1172.9" y2="-416.8" stroke="#9b9b9b" stroke-width="0.7" /><line x1="3151.1" y1="2376.9" x2="240.9" y2="-542.2" stroke="#9b9b9b" stroke-width="0.7" /><line x1="-1592.1" y1="687.7" x2="1164.8" y2="-421.7" stroke="#9b9b9b" stroke-width="0.7" /><line x1="3159.1" y1="2345.4" x2="249.4" y2="-544.5" stroke="#9b9b9b" stroke-width="0.7" /><line x1="-1586.3" y1="669.8" x2="1156.7" y2="-426.5" stroke="#9b9b9b" stroke-width="0.7" /><line x1="3167.0" y1="2314.4" x2="257.8" y2="-546.9" stroke="#9b9b9b" stroke-width="0.7" /><line x1="-1580.6" y1="652.2" x2="1148.6" y2="-431.4" stroke="#9b9b9b" stroke-width="0.7" /><line x1="3174.8" y1="2283.8" x2="266.2" y2="-549.2" stroke="#9b9b9b" stroke-width="0.7" /><line x1="-1575.1" y1="634.9" x2="1140.7" y2="-436.2" stroke="#9b9b9b" stroke-width="0.7" /><line x1="3182.4" y1="2253.7" x2="274.5" y2="-551.5" stroke="#9b9b9b" stroke-width="0.7" /><line x1="-1569.6" y1="617.9" x2="1132.8" y2="-440.9" stroke="#9b9b9b" stroke-width="0.7" /><line x1="3190.0" y1="2224.1" x2="282.8" y2="-553.8" stroke="#9b9b9b" stroke-width="0.7" /><line x1="-1564.1" y1="601.1" x2="1124.9" y2="-445.6" stroke="#9b9b9b" stroke-width="0.7" /><line x1="3197.4" y1="2194.9" x2="291.1" y2="-556.1" stroke="#9b9b9b" stroke-width="0.7" /><line x1="-1558.8" y1="584.6" x2="1117.2" y2="-450.3" stroke="#9b9b9b" stroke-width="0.7" /><line x1="3204.7" y1="2166.2" x2="299.3" y2="-558.4" stroke="#939393" stroke-width="1" /><line x1="-1553.5" y1="568.3" x2="1109.4" y2="-455.0" stroke="#939393" stroke-width="1" /><line x1="3211.9" y1="2137.9" x2="307.5" y2="-560.6" stroke="#9b9b9b" stroke-width="0.7" /><line x1="-1548.4" y1="552.2" x2="1101.8" y2="-459.6" stroke="#9b9b9b" stroke-width="0.7" /><line x1="3219.0" y1="2110.0" x2="315.6" y2="-562.9" stroke="#9b9b9b" stroke-width="0.7" /><line x1="-1543.3" y1="536.4" x2="1094.2" y2="-464.1" stroke="#9b9b9b" stroke-width="0.7" /><line x1="3225.9" y1="2082.5" x2="323.8" y2="-565.2" stroke="#9b9b9b" stroke-width="0.7" /><line x1="-1538.2" y1="520.8" x2="1086.7" y2="-468.7" stroke="#9b9b9b" stroke-width="0.7" /><line x1="3232.8" y1="2055.4" x2="331.9" y2="-567.4" stroke="#9b9b9b" stroke-width="0.7" /><line x1="-1533.3" y1="505.4" x2="1079.2" y2="-473.2" stroke="#9b9b9b" stroke-width="0.7" /><line x1="3239.6" y1="2028.7" x2="339.9" y2="-569.6" stroke="#9b9b9b" stroke-width="0.7" /><line x1="-1528.4" y1="490.2" x2="1071.8" y2="-477.6" stroke="#9b9b9b" stroke-width="0.7" /><line x1="3246.3" y1="2002.4" x2="347.9" y2="-571.9" stroke="#9b9b9b" stroke-width="0.7" /><line x1="-1523.6" y1="475.3" x2="1064.4" y2="-482.1" stroke="#9b9b9b" stroke-width="0.7" /><line x1="3252.9" y1="1976.5" x2="355.9" y2="-574.1" stroke="#9b9b9b" stroke-width="0.7" /><line x1="-1518.8" y1="460.6" x2="1057.1" y2="-486.5" stroke="#9b9b9b" stroke-width="0.7" /><line x1="3259.4" y1="1950.9" x2="363.9" y2="-576.3" stroke="#9b9b9b" stroke-width="0.7" /><line x1="-1514.1" y1="446.0" x2="1049.8" y2="-490.8" stroke="#9b9b9b" stroke-width="0.7" /><line x1="3265.8" y1="1925.7" x2="371.8" y2="-578.5" stroke="#9b9b9b" stroke-width="0.7" /><line x1="-1509.5" y1="431.7" x2="1042.6" y2="-495.2" stroke="#9b9b9b" stroke-width="0.7" /><line x1="3272.1" y1="1900.8" x2="379.7" y2="-580.7" stroke="#939393" stroke-width="1" /><line x1="-1504.9" y1="417.6" x2="1035.5" y2="-499.5" stroke="#939393" stroke-width="1" /><line x1="3278.3" y1="1876.3" x2="387.6" y2="-582.8" stroke="#9b9b9b" stroke-width="0.7" /><line x1="-1500.4" y1="403.6" x2="1028.4" y2="-503.7" stroke="#9b9b9b" stroke-width="0.7" /><line x1="3284.5" y1="1852.2" x2="395.4" y2="-585.0" stroke="#9b9b9b" stroke-width="0.7" /><line x1="-1496.0" y1="389.9" x2="1021.4" y2="-508.0" stroke="#9b9b9b" stroke-width="0.7" /><line x1="3290.5" y1="1828.3" x2="403.2" y2="-587.2" stroke="#9b9b9b" stroke-width="0.7" /><line x1="-1491.6" y1="376.3" x2="1014.4" y2="-512.2" stroke="#9b9b9b" stroke-width="0.7" /><line x1="3296.5" y1="1804.8" x2="410.9" y2="-589.3" stroke="#9b9b9b" stroke-width="0.7" /><line x1="-1487.3" y1="362.9" x2="1007.5" y2="-516.3" stroke="#9b9b9b" stroke-width="0.7" /><line x1="3302.4" y1="1781.6" x2="418.7" y2="-591.4" stroke="#9b9b9b" stroke-width="0.7" /><line x1="-1483.0" y1="349.7" x2="1000.6" y2="-520.5" stroke="#9b9b9b" stroke-width="0.7" /><line x1="3308.2" y1="1758.7" x2="426.4" y2="-593.6" stroke="#9b9b9b" stroke-width="0.7" /><line x1="-1478.8" y1="336.7" x2="993.8" y2="-524.6" stroke="#9b9b9b" stroke-width="0.7" /><line x1="3313.9" y1="1736.1" x2="434.0" y2="-595.7" stroke="#9b9b9b" stroke-width="0.7" /><line x1="-1474.7" y1="323.8" x2="987.0" y2="-528.7" stroke="#9b9b9b" stroke-width="0.7" /><line x1="3319.6" y1="1713.9" x2="441.7" y2="-597.8" stroke="#9b9b9b" stroke-width="0.7" /><line x1="-1470.6" y1="311.1" x2="980.3" y2="-532.7" stroke="#9b9b9b" stroke-width="0.7" /><line x1="3325.2" y1="1691.9" x2="449.3" y2="-599.9" stroke="#9b9b9b" stroke-width="0.7" /><line x1="-1466.6" y1="298.6" x2="973.6" y2="-536.7" stroke="#9b9b9b" stroke-width="0.7" /><line x1="3330.7" y1="1670.2" x2="456.8" y2="-602.0" stroke="#939393" stroke-width="1" /><line x1="-1462.6" y1="286.2" x2="966.9" y2="-540.7" stroke="#939393" stroke-width="1" /><line x1="3336.2" y1="1648.7" x2="464.4" y2="-604.1" stroke="#9b9b9b" stroke-width="0.7" /><line x1="-1458.6" y1="274.0" x2="960.4" y2="-544.7" stroke="#9b9b9b" stroke-width="0.7" /><line x1="3341.5" y1="1627.6" x2="471.9" y2="-606.2" stroke="#9b9b9b" stroke-width="0.7" /><line x1="-1454.7" y1="261.9" x2="953.8" y2="-548.6" stroke="#9b9b9b" stroke-width="0.7" /><line x1="3346.8" y1="1606.7" x2="479.4" y2="-608.3" stroke="#9b9b9b" stroke-width="0.7" /><line x1="-1450.9" y1="250.0" x2="947.3" y2="-552.5" stroke="#9b9b9b" stroke-width="0.7" /><line x1="3352.1" y1="1586.1" x2="486.8" y2="-610.3" stroke="#9b9b9b" stroke-width="0.7" /><line x1="-1447.1" y1="238.2" x2="940.9" y2="-556.4" stroke="#9b9b9b" stroke-width="0.7" /><line x1="3357.2" y1="1565.8" x2="494.2" y2="-612.4" stroke="#9b9b9b" stroke-width="0.7" /><line x1="-1443.4" y1="226.6" x2="934.5" y2="-560.2" stroke="#9b9b9b" stroke-width="0.7" /><line x1="3362.3" y1="1545.7" x2="501.6" y2="-614.4" stroke="#9b9b9b" stroke-width="0.7" /><line x1="-1439.6" y1="215.2" x2="928.2" y2="-564.1" stroke="#9b9b9b" stroke-width="0.7" /><line x1="3367.4" y1="1525.8" x2="509.0" y2="-616.5" stroke="#9b9b9b" stroke-width="0.7" /><line x1="-1436.0" y1="203.8" x2="921.9" y2="-567.8" stroke="#9b9b9b" stroke-width="0.7" /><line x1="3372.4" y1="1506.2" x2="516.3" y2="-618.5" stroke="#9b9b9b" stroke-width="0.7" /><line x1="-1432.4" y1="192.6" x2="915.6" y2="-571.6" stroke="#9b9b9b" stroke-width="0.7" /><line x1="3377.3" y1="1486.9" x2="523.6" y2="-620.5" stroke="#9b9b9b" stroke-width="0.7" /><line x1="-1428.8" y1="181.6" x2="909.4" y2="-575.4" stroke="#9b9b9b" stroke-width="0.7" /><line x1="3382.1" y1="1467.8" x2="530.9" y2="-622.5" stroke="#939393" stroke-width="1" /><line x1="-1425.3" y1="170.7" x2="903.2" y2="-579.1" stroke="#939393" stroke-width="1" /><line x1="3386.9" y1="1448.9" x2="538.2" y2="-624.6" stroke="#9b9b9b" stroke-width="0.7" /><line x1="-1421.8" y1="159.9" x2="897.1" y2="-582.8" stroke="#9b9b9b" stroke-width="0.7" /><line x1="3391.7" y1="1430.2" x2="545.4" y2="-626.6" stroke="#9b9b9b" stroke-width="0.7" /><line x1="-1418.4" y1="149.2" x2="891.0" y2="-586.4" stroke="#9b9b9b" stroke-width="0.7" /><line x1="3396.4" y1="1411.8" x2="552.6" y2="-628.5" stroke="#9b9b9b" stroke-width="0.7" /><line x1="-1415.0" y1="138.7" x2="885.0" y2="-590.1" stroke="#9b9b9b" stroke-width="0.7" /><line x1="3401.0" y1="1393.6" x2="559.7" y2="-630.5" stroke="#9b9b9b" stroke-width="0.7" /><line x1="-1411.6" y1="128.3" x2="879.0" y2="-593.7" stroke="#9b9b9b" stroke-width="0.7" /><line x1="3405.6" y1="1375.6" x2="566.8" y2="-632.5" stroke="#9b9b9b" stroke-width="0.7" /><line x1="-1408.3" y1="118.0" x2="873.0" y2="-597.2" stroke="#9b9b9b" stroke-width="0.7" /><line x1="3410.1" y1="1357.8" x2="573.9" y2="-634.5" stroke="#9b9b9b" stroke-width="0.7" /><line x1="-1405.0" y1="107.8" x2="867.1" y2="-600.8" stroke="#9b9b9b" stroke-width="0.7" /><line x1="3414.5" y1="1340.3" x2="581.0" y2="-636.4" stroke="#9b9b9b" stroke-width="0.7" /><line x1="-1401.8" y1="97.7" x2="861.2" y2="-604.3" stroke="#9b9b9b" stroke-width="0.7" /><line x1="3418.9" y1="1322.9" x2="588.1" y2="-638.4" stroke="#9b9b9b" stroke-width="0.7" /><line x1="-1398.6" y1="87.8" x2="855.4" y2="-607.9" stroke="#9b9b9b" stroke-width="0.7" /><line x1="3423.3" y1="1305.7" x2="595.1" y2="-640.3" stroke="#9b9b9b" stroke-width="0.7" /><line x1="-1395.4" y1="78.0" x2="849.6" y2="-611.3" stroke="#9b9b9b" stroke-width="0.7" /><line x1="3427.6" y1="1288.8" x2="602.1" y2="-642.3" stroke="#939393" stroke-width="1" /><line x1="-1392.3" y1="68.3" x2="843.8" y2="-614.8" stroke="#939393" stroke-width="1" /><line x1="3431.9" y1="1272.0" x2="609.0" y2="-644.2" stroke="#9b9b9b" stroke-width="0.7" /><line x1="-1389.2" y1="58.7" x2="838.1" y2="-618.3" stroke="#9b9b9b" stroke-width="0.7" /><line x1="3436.1" y1="1255.4" x2="616.0" y2="-646.1" stroke="#9b9b9b" stroke-width="0.7" /><line x1="-1386.1" y1="49.2" x2="832.4" y2="-621.7" stroke="#9b9b9b" stroke-width="0.7" /><line x1="3440.3" y1="1239.0" x2="622.9" y2="-648.0" stroke="#9b9b9b" stroke-width="0.7" /><line x1="-1383.1" y1="39.8" x2="826.8" y2="-625.1" stroke="#9b9b9b" stroke-width="0.7" /><line x1="3444.4" y1="1222.8" x2="629.8" y2="-649.9" stroke="#9b9b9b" stroke-width="0.7" /><line x1="-1380.1" y1="30.5" x2="821.2" y2="-628.4" stroke="#9b9b9b" stroke-width="0.7" /><line x1="3448.4" y1="1206.8" x2="636.6" y2="-651.8" stroke="#9b9b9b" stroke-width="0.7" /><line x1="-1377.1" y1="21.3" x2="815.6" y2="-631.8" stroke="#9b9b9b" stroke-width="0.7" /><line x1="3452.5" y1="1191.0" x2="643.5" y2="-653.7" stroke="#9b9b9b" stroke-width="0.7" /><line x1="-1374.2" y1="12.2" x2="810.1" y2="-635.1" stroke="#9b9b9b" stroke-width="0.7" /><line x1="3456.4" y1="1175.3" x2="650.3" y2="-655.6" stroke="#9b9b9b" stroke-width="0.7" /><line x1="-1371.3" y1="3.2" x2="804.6" y2="-638.4" stroke="#9b9b9b" stroke-width="0.7" /><line x1="3460.4" y1="1159.8" x2="657.0" y2="-657.5" stroke="#9b9b9b" stroke-width="0.7" /><line x1="-1368.4" y1="-5.6" x2="799.1" y2="-641.7" stroke="#9b9b9b" stroke-width="0.7" /><line x1="3464.3" y1="1144.5" x2="663.8" y2="-659.4" stroke="#9b9b9b" stroke-width="0.7" /><line x1="-1365.6" y1="-14.4" x2="793.7" y2="-645.0" stroke="#9b9b9b" stroke-width="0.7" /><line x1="3468.1" y1="1129.3" x2="670.5" y2="-661.2" stroke="#939393" stroke-width="1" /><line x1="-1362.8" y1="-23.1" x2="788.3" y2="-648.2" stroke="#939393" stroke-width="1" /><line x1="3471.9" y1="1114.3" x2="677.2" y2="-663.1" stroke="#9b9b9b" stroke-width="0.7" /><line x1="-1360.0" y1="-31.7" x2="783.0" y2="-651.4" stroke="#9b9b9b" stroke-width="0.7" /><line x1="3475.7" y1="1099.5" x2="683.9" y2="-664.9" stroke="#9b9b9b" stroke-width="0.7" /><line x1="-1357.3" y1="-40.2" x2="777.7" y2="-654.6" stroke="#9b9b9b" stroke-width="0.7" /><line x1="3479.4" y1="1084.8" x2="690.5" y2="-666.8" stroke="#9b9b9b" stroke-width="0.7" /><line x1="-1354.6" y1="-48.6" x2="772.4" y2="-657.8" stroke="#9b9b9b" stroke-width="0.7" /><line x1="3483.1" y1="1070.3" x2="697.2" y2="-668.6" stroke="#9b9b9b" stroke-width="0.7" /><line x1="-1351.9" y1="-57.0" x2="767.1" y2="-661.0" stroke="#9b9b9b" stroke-width="0.7" /><line x1="3486.8" y1="1056.0" x2="703.8" y2="-670.4" stroke="#9b9b9b" stroke-width="0.7" /><line x1="-1349.2" y1="-65.2" x2="761.9" y2="-664.1" stroke="#9b9b9b" stroke-width="0.7" /><line x1="3490.4" y1="1041.7" x2="710.3" y2="-672.3" stroke="#9b9b9b" stroke-width="0.7" /><line x1="-1346.6" y1="-73.4" x2="756.8" y2="-667.2" stroke="#9b9b9b" stroke-width="0.7" /><line x1="3494.0" y1="1027.7" x2="716.9" y2="-674.1" stroke="#9b9b9b" stroke-width="0.7" /><line x1="-1344.0" y1="-81.5" x2="751.6" y2="-670.3" stroke="#9b9b9b" stroke-width="0.7" /><line x1="3497.5" y1="1013.8" x2="723.4" y2="-675.9" stroke="#9b9b9b" stroke-width="0.7" /><line x1="-1341.4" y1="-89.4" x2="746.5" y2="-673.4" stroke="#9b9b9b" stroke-width="0.7" /><line x1="3501.0" y1="1000.0" x2="729.9" y2="-677.7" stroke="#9b9b9b" stroke-width="0.7" /><line x1="-1338.8" y1="-97.3" x2="741.4" y2="-676.4" stroke="#9b9b9b" stroke-width="0.7" /><line x1="3504.4" y1="986.4" x2="736.4" y2="-679.5" stroke="#939393" stroke-width="1" /><line x1="-1336.3" y1="-105.2" x2="736.4" y2="-679.5" stroke="#939393" stroke-width="1" /></g>
<line x1="446.3" y1="296.8" x2="1474.3" y2="-235.4" stroke="#8c4640" stroke-width="1" />
<line x1="446.3" y1="296.8" x2="-59.7" y2="-458.9" stroke="#5a8452" stroke-width="1" />
<polygon points="485.4,105.5 516.1,139.6 510.1,215.7 482.4,183.6" fill="#058f8a" stroke="#3adbd3" stroke-width="1" stroke-linejoin="round"/>
<polygon points="485.4,105.5 497.5,119.0 493.4,196.3 482.4,183.6" fill="#0e9a95" stroke="#3adbd3" stroke-width="1" stroke-linejoin="round"/>
<line x1="497.5" y1="119.0" x2="493.4" y2="196.3" stroke="#36d0c8" stroke-width="1" />
<polygon points="329.4,179.0 421.5,135.6 424.8,211.9 342.0,252.7" fill="#02302e" stroke="#3adbd3" stroke-width="1" stroke-linejoin="round"/>
<line x1="372.7" y1="158.6" x2="380.8" y2="233.5" stroke="#9fe8e2" stroke-width="1" />
<polyline points="336.0,217.8 423.2,175.8" fill="none" stroke="#9fe8e2" stroke-width="1" stroke-linejoin="round" stroke-linecap="round"/>
<polygon points="421.5,135.6 479.5,218.2 540.3,330.7 572.6,376.4 559.7,435.5 531.1,393.5 477.0,289.2 424.8,211.9" fill="#068c88" stroke="#3adbd3" stroke-width="1" stroke-linejoin="round"/>
<polyline points="423.2,175.8 478.2,255.6 535.5,363.9 565.8,407.7" fill="none" stroke="#36d0c8" stroke-width="1" stroke-linejoin="round" stroke-linecap="round"/>
<line x1="483.4" y1="225.3" x2="479.3" y2="295.6" stroke="#36d0c8" stroke-width="1" />
<line x1="540.3" y1="330.7" x2="531.1" y2="393.5" stroke="#3adbd3" stroke-width="1" />
<line x1="556.3" y1="353.3" x2="545.3" y2="414.3" stroke="#36d0c8" stroke-width="1" />
<polygon points="234.0,158.5 417.5,463.0 421.8,514.4 255.9,233.5" fill="#068c88" stroke="#3adbd3" stroke-width="1" stroke-linejoin="round"/>
<polyline points="245.5,198.0 419.7,490.3" fill="none" stroke="#36d0c8" stroke-width="1" stroke-linejoin="round" stroke-linecap="round"/>
<line x1="314.2" y1="291.6" x2="325.2" y2="350.9" stroke="#36d0c8" stroke-width="1" />
<polygon points="417.5,463.0 488.4,424.1 484.6,479.1 421.8,514.4" fill="#02302e" stroke="#3adbd3" stroke-width="1" stroke-linejoin="round"/>
<line x1="444.3" y1="448.0" x2="445.5" y2="500.9" stroke="#9fe8e2" stroke-width="1" />
<polyline points="419.7,490.3 486.1,452.7" fill="none" stroke="#9fe8e2" stroke-width="1" stroke-linejoin="round" stroke-linecap="round"/>
<polygon points="572.6,376.4 621.8,349.0 603.7,410.3 559.7,435.5" fill="#02302e" stroke="#3adbd3" stroke-width="1" stroke-linejoin="round"/>
<line x1="597.2" y1="362.7" x2="581.7" y2="422.9" stroke="#9fe8e2" stroke-width="1" />
<polyline points="565.8,407.7 612.2,381.4" fill="none" stroke="#9fe8e2" stroke-width="1" stroke-linejoin="round" stroke-linecap="round"/>
<polygon points="234.0,158.5 418.3,74.7 479.5,157.3 516.1,139.6 485.4,105.5 517.5,90.4 520.8,95.7 524.1,101.1 527.5,106.4 531.0,111.8 534.4,117.2 538.0,122.7 541.5,128.2 545.0,133.7 548.6,139.2 552.2,144.8 555.7,150.5 559.3,156.2 562.8,161.9 566.3,167.7 569.8,173.6 573.2,179.6 576.6,185.6 579.9,191.7 583.1,197.9 586.3,204.2 589.4,210.6 592.5,217.1 595.4,223.7 598.2,230.4 600.9,237.2 603.5,244.2 605.9,251.2 608.2,258.5 610.4,265.8 612.4,273.3 614.3,281.0 615.9,288.8 617.4,296.8 618.7,305.0 619.8,313.4 620.6,322.0 621.3,330.7 621.7,339.7 621.9,348.9 572.6,376.4 540.3,330.7 479.5,218.2 421.5,135.6 329.4,179.0 488.4,424.1 417.5,463.0" fill="#01968f" stroke="#3adbd3" stroke-width="1.2" stroke-linejoin="round"/>
<line x1="362.6" y1="100.1" x2="395.8" y2="147.7" stroke="#36d0c8" stroke-width="1" />
<line x1="318.6" y1="298.8" x2="385.4" y2="265.3" stroke="#36d0c8" stroke-width="1" />
<line x1="479.5" y1="218.2" x2="569.5" y2="173.1" stroke="#36d0c8" stroke-width="1" />
<line x1="19.1" y1="513.4" x2="12.4" y2="503.0" stroke="#6e6e6e" stroke-width="0.9"/>
<text x="11.5" y="502.8" font-family="Liberation Sans, sans-serif" font-size="5.5" fill="#5c5c5c">y</text>
<line x1="19.1" y1="513.4" x2="34.2" y2="506.3" stroke="#6e6e6e" stroke-width="0.9"/>
<text x="33.6" y="505.9" font-family="Liberation Sans, sans-serif" font-size="5.5" fill="#5c5c5c">x</text>
<line x1="19.1" y1="513.4" x2="20.0" y2="505.5" stroke="#6e6e6e" stroke-width="0.9"/>
<text x="21.1" y="505.9" font-family="Liberation Sans, sans-serif" font-size="5.5" fill="#5c5c5c">z</text>
</svg></div>
<div id="vlabel" class="abs"><span class="t">Perspective</span></div>
<div id="props" class="abs"><div class="abs" style="left:1px;top:0.5px;width:82px;height:9.5px;background:linear-gradient(180deg,#eef1f6,#dfe4ec)"></div>
<span class="t" style="left:6px;top:3px;font-size:6.1px;color:#6c7480">Properties</span>
<svg class="abs" style="left:38px;top:2px" width="38" height="7" viewBox="0 0 38 7"><defs><pattern id="gd" width="2.1" height="2.3" patternUnits="userSpaceOnUse"><rect x=".3" y=".3" width="1" height="1" fill="#b4bcc8"/></pattern></defs><rect width="38" height="7" fill="url(#gd)"/></svg>
<div class="abs" style="left:76.5px;top:1.5px;width:6.5px;height:7.5px;background:#a9bfdc;border:0.5px solid #8ea6c8;box-sizing:border-box"></div>
<span class="t" style="left:6.5px;top:14.0px">Viewport</span>
<div class="abs" style="left:32px;top:17px;width:51px;height:1px;background:#d6d6d6"></div>
<div class="row" style="top:23.4px;height:10.6px"></div>
<span class="t" style="left:13px;top:25.8px">Title</span>
<span class="t" style="left:46px;top:25.8px">Perspective</span>

<div class="row" style="top:33.6px;height:10.6px"></div>
<span class="t g" style="left:13px;top:36.0px">Width</span>
<span class="t g" style="left:46px;top:36.0px">1705</span>

<div class="row" style="top:43.8px;height:10.6px"></div>
<span class="t g" style="left:13px;top:46.2px">Height</span>
<span class="t g" style="left:46px;top:46.2px">998</span>

<div class="row" style="top:54.0px;height:10.6px"></div>
<span class="t" style="left:13px;top:56.4px">Projection</span>
<span class="t" style="left:46px;top:56.4px">Perspe...</span>
<div class="btn" style="left:71.5px;top:54.6px;width:9px;height:9px"><svg width="7" height="7" viewBox="0 0 7 7" style="position:absolute;left:0;top:0"><path d="M1.8 2.6H5.2L3.5 4.8Z" fill="#222"/></svg></div>
<span class="t" style="left:6.5px;top:67.4px">Camera</span>
<div class="row" style="top:76.6px;height:10.6px"></div>
<span class="t" style="left:13px;top:79.0px">Lens Len...</span>
<span class="t" style="left:46px;top:79.0px">50.0</span>

<div class="row" style="top:86.8px;height:10.6px"></div>
<span class="t" style="left:13px;top:89.2px">X Location</span>
<span class="t" style="left:46px;top:89.2px">-16.017</span>

<div class="row" style="top:97.0px;height:10.6px"></div>
<span class="t" style="left:13px;top:99.4px">Y Location</span>
<span class="t" style="left:46px;top:99.4px">-28.120</span>

<div class="row" style="top:107.2px;height:10.6px"></div>
<span class="t" style="left:13px;top:109.6px">Z Location</span>
<span class="t" style="left:46px;top:109.6px">59.082</span>

<div class="row" style="top:117.4px;height:10.6px"></div>
<span class="t" style="left:13px;top:119.8px">Location</span>
<div class="btn" style="left:44.5px;top:118.4px;width:36px;height:8.4px"><span class="t" style="left:9.5px;top:0.6px">Place...</span></div>
<span class="t" style="left:6.5px;top:131.0px">Target</span>
<div class="row" style="top:139.8px;height:10.6px"></div>
<span class="t" style="left:13px;top:142.2px">X Target</span>
<span class="t" style="left:46px;top:142.2px">0.534</span>

<div class="row" style="top:149.8px;height:10.6px"></div>
<span class="t" style="left:13px;top:152.2px">Y Target</span>
<span class="t" style="left:46px;top:152.2px">-0.135</span>

<div class="row" style="top:159.8px;height:10.6px"></div>
<span class="t" style="left:13px;top:162.2px">Z Target</span>
<span class="t" style="left:46px;top:162.2px">3.442</span>

<div class="row" style="top:170.0px;height:10.6px"></div>
<span class="t" style="left:13px;top:172.4px">Location</span>
<div class="btn" style="left:44.5px;top:171.0px;width:36px;height:8.4px"><span class="t" style="left:9.5px;top:0.6px">Place...</span></div>
<span class="t" style="left:6.5px;top:183.4px">Wallpaper</span>
<div class="row" style="top:192.4px;height:10.6px"></div>
<span class="t" style="left:13px;top:194.8px">Filename</span>
<span class="t" style="left:46px;top:194.8px">(none)</span>
<div class="btn" style="left:72px;top:193.2px;width:9px;height:8.8px"><span class="t" style="left:1.6px;top:1.4px;font-size:5px">...</span></div>
<div class="row" style="top:202.2px;height:10.6px"></div>
<span class="t" style="left:13px;top:204.6px">Show</span>
<div class="cb" style="left:46.5px;top:204.0px"><svg width="5" height="5" viewBox="0 0 5 5" style="position:absolute;left:0;top:-.3px"><path d="M.9 2.4L2 3.8L4.2 .7" fill="none" stroke="#2a3a6a" stroke-width=".9"/></svg></div>
<div class="row" style="top:212.4px;height:10.6px"></div>
<span class="t" style="left:13px;top:214.8px">Gray</span>
<div class="cb" style="left:46.5px;top:214.2px"><svg width="5" height="5" viewBox="0 0 5 5" style="position:absolute;left:0;top:-.3px"><path d="M.9 2.4L2 3.8L4.2 .7" fill="none" stroke="#2a3a6a" stroke-width=".9"/></svg></div></div>
<div id="osnap" class="abs"><svg class="abs" style="left:1px;top:2px" width="3" height="9" viewBox="0 0 3 9"><path d="M1 .5V8.5" stroke="#b0b0b0" stroke-width="1" stroke-dasharray="1 1"/></svg>
<div class="cb" style="left:5.5px"></div><span class="t" style="left:15.5px">End</span>
<div class="cb" style="left:36px"></div><span class="t" style="left:45.5px">Near</span>
<div class="cb" style="left:66px"></div><span class="t" style="left:75px">Point</span>
<div class="cb" style="left:96px"></div><span class="t" style="left:105px">Mid</span>
<div class="cb" style="left:126px"></div><span class="t" style="left:135px">Cen</span>
<div class="cb" style="left:156px"></div><span class="t" style="left:165px">Int</span>
<div class="cb" style="left:186px"></div><span class="t" style="left:195px">Perp</span>
<div class="cb" style="left:216px"></div><span class="t" style="left:225px">Tan</span>
<div class="cb" style="left:246px"></div><span class="t" style="left:255px">Quad</span>
<div class="cb" style="left:275.5px"></div><span class="t" style="left:284.7px">Knot</span>
<div class="cb" style="left:304.8px"></div><span class="t" style="left:314px">Project</span>
<div class="cb" style="left:334.8px"></div><span class="t" style="left:343.5px">STrack</span>
<div class="cb" style="left:364.8px"></div><span class="t" style="left:374px">Disable</span>
<div class="abs" style="left:396px;top:0;width:1px;height:12px;background:#c4c4c4"></div><div class="abs" style="left:397px;top:0;width:1px;height:12px;background:#fff"></div></div>
<div id="status" class="abs"><span class="t" style="left:5px">CPlane</span>
<span class="t" style="left:32.5px">x -26.05</span>
<span class="t" style="left:79.5px">y 3.34</span>
<span class="t" style="left:126px">z 0.00</span>
<span class="t" style="left:172.5px">0.00</span>
<span class="t" style="left:228px">Default</span>
<span class="t" style="left:315.5px"><b>Snap</b></span>
<span class="t" style="left:338.5px"><b>Ortho</b></span>
<span class="t" style="left:363px"><b>Planar</b></span>
<span class="t" style="left:387.8px">Osnap</span>
<span class="t" style="left:416.8px">Record History</span>
<div class="abs" style="left:220.8px;top:2.3px;width:6px;height:6px;background:#0a0a0a"></div></div>
<div id="bottom" class="abs"></div>
</body></html>
